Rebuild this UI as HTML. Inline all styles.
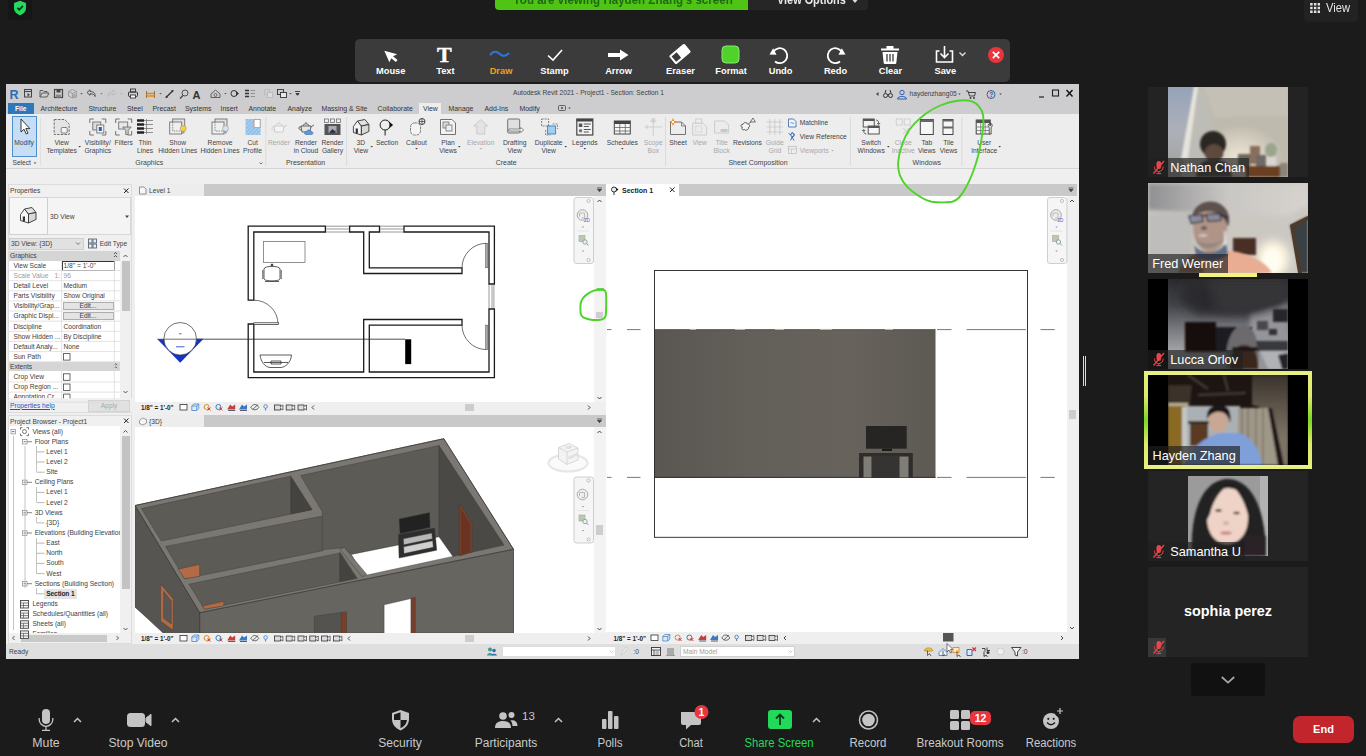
<!DOCTYPE html>
<html><head><meta charset="utf-8"><title>Zoom Meeting</title>
<style>
*{box-sizing:border-box}
html,body{margin:0;padding:0}
body{width:1366px;height:756px;background:#1b1b1b;position:relative;overflow:hidden;font-family:"Liberation Sans",sans-serif;color:#fff}
.a{position:absolute}
.t{position:absolute;white-space:nowrap;line-height:1}
.c{transform:translateX(-50%);text-align:center}
/* zoom bottom bar */
.bl{position:absolute;top:736px;font-size:12.3px;color:#c9c9c9;white-space:nowrap;transform:translateX(-50%);line-height:14px}
.tl{position:absolute;top:26.200px;font-size:9.3px;font-weight:bold;color:#fff;white-space:nowrap;transform:translateX(-50%);line-height:13px}
/* revit */
#rv{position:absolute;left:0;top:0;width:1366px;height:756px;color:#333;font-size:7px}
#rv .t{font-size:6.65px;color:#404040;line-height:8px}
#rv .tab{font-size:6.9px;color:#333}
.rt{position:absolute;top:20.5px;font-size:7px;color:#333;white-space:nowrap;line-height:8px}
.rl{position:absolute;font-size:6.7px;color:#444;white-space:nowrap;line-height:8.6px;text-align:center;transform:translateX(-50%)}
.rg{position:absolute;font-size:7px;color:#444;white-space:nowrap;line-height:8px;transform:translateX(-50%)}
.dis{color:#a8a8a8 !important}
.nm{position:absolute;left:0;bottom:0;height:19px;background:rgba(32,32,32,.66);color:#fff;font-size:12.7px;line-height:20px;padding:0 0 0 22.300px;white-space:nowrap;overflow:hidden}
</style></head>
<body>
<!-- TOP -->
<div class="a" style="left:8px;top:0;width:24px;height:20px;background:#161616;border-radius:0 0 4px 4px"></div>
<svg class="a" style="left:13px;top:0" width="14" height="16" viewBox="0 0 14 16"><path d="M7 .8 L13 3 V8 C13 11.5 10.5 14 7 15.3 C3.500 14 1 11.500 1 8 V3 Z" fill="#23d95e"/><path d="M4.300 7.800 L6.300 9.700 L9.900 5.900" fill="none" stroke="#10331c" stroke-width="1.700"/></svg>
<div class="a" style="left:495px;top:-14px;width:253px;height:24px;background:#4fc414;border-radius:0 0 0 4px"></div>
<div class="t" id="ban" style="left:512.700px;top:-6.200px;font-size:12.500px;font-weight:bold;color:#1d6a12;transform-origin:0 0;transform:scaleX(.925)">You are viewing Hayden Zhang's screen</div>
<div class="a" style="left:748px;top:-14px;width:120px;height:24px;background:#262626;border-radius:0 0 4px 0"></div>
<div class="t" id="vo" style="left:777px;top:-6.200px;font-size:12.500px;font-weight:bold;color:#e8e8e8;transform-origin:0 0;transform:scaleX(.871)">View Options</div>
<svg class="a" style="left:851px;top:0" width="8" height="6" viewBox="0 0 8 6"><path d="M1.500 0 H6.500 L4 3 Z" fill="#e0e0e0"/></svg>
<div class="a" style="left:1303.500px;top:-6px;width:54.500px;height:28px;background:#222;border-radius:4px"></div>
<svg class="a" style="left:1309.700px;top:2.900px" width="10.300" height="10" viewBox="0 0 12 12" fill="#e4e4e4"><rect x="0" y="0" width="3" height="3"/><rect x="4.500" y="0" width="3" height="3"/><rect x="9" y="0" width="3" height="3"/><rect x="0" y="4.500" width="3" height="3"/><rect x="4.500" y="4.500" width="3" height="3"/><rect x="9" y="4.500" width="3" height="3"/><rect x="0" y="9" width="3" height="3"/><rect x="4.500" y="9" width="3" height="3"/><rect x="9" y="9" width="3" height="3"/></svg>
<div class="t" style="left:1326.400px;top:1.500px;font-size:12.700px;color:#e4e4e4;transform-origin:0 0;transform:scaleX(.88)">View</div>

<!-- ANNOTATION TOOLBAR -->
<div id="tb" class="a" style="left:355px;top:39px;width:655px;height:43px;background:#3b3b3b;border-radius:5px">
<svg class="a" style="left:0;top:0" width="655" height="43" viewBox="355 39 655 43">
<!-- mouse -->
<path d="M0 0 L0 12.500 L3.400 9.600 L6 14.900 L8.400 13.700 L5.800 8.500 L10.400 8.300 Z" fill="#fff" transform="translate(384.300 50.800) rotate(-24)"/>
<!-- draw -->
<path d="M490.500 54.500 C493.500 51 496.500 51 499.500 53.800 C502.500 56.600 505.500 56.600 508.500 53.500" stroke="#2e74df" stroke-width="2" fill="none" stroke-linecap="round"/>
<!-- stamp -->
<path d="M548 55.500 L553 60 L562 50" stroke="#fff" stroke-width="1.600" fill="none"/>
<!-- arrow -->
<path d="M608 53 H620 V49.500 L628.500 55 L620 60.500 V57 H608 Z" fill="#fff"/>
<!-- eraser -->
<g transform="rotate(-40 680 54)"><rect x="670" y="48.500" width="20" height="11" rx="1.500" fill="#fff"/><rect x="672" y="50.500" width="6.500" height="7" fill="#3b3b3b"/></g>
<!-- format -->
<rect x="722" y="46" width="17" height="17" rx="4" fill="#4fd32b" stroke="#8be86e" stroke-width="1"/>
<!-- undo -->
<path d="M773.500 51.500 A7.500 7.500 0 1 1 775 61.500" stroke="#fff" stroke-width="1.800" fill="none"/><path d="M769.500 54.500 L776.500 54.800 L773.200 48.200 Z" fill="#fff"/>
<!-- redo -->
<path d="M841.500 51.500 A7.500 7.500 0 1 0 840 61.500" stroke="#fff" stroke-width="1.800" fill="none"/><path d="M845.500 54.500 L838.500 54.800 L841.800 48.200 Z" fill="#fff"/>
<!-- clear -->
<path d="M881 48.500 H899 V50.500 H881 Z M886.500 46 H893.500 V48.500 H886.500 Z" fill="#fff"/><path d="M882.500 52 H897.500 L896.300 63 Q896.200 64 895.200 64 H884.800 Q883.800 64 883.700 63 Z" fill="#fff"/><path d="M887 54 V61.500 M890 54 V61.500 M893 54 V61.500" stroke="#3b3b3b" stroke-width="1.300"/>
<!-- save -->
<path d="M939.500 51 H936.500 V62 H952.500 V51 H949.500" stroke="#fff" stroke-width="1.600" fill="none"/><path d="M944.500 46 V57 M940.500 53.500 L944.500 57.500 L948.500 53.500" stroke="#fff" stroke-width="1.600" fill="none"/>
<path d="M959.500 52.500 L962.500 55.500 L965.500 52.500" stroke="#e0e0e0" stroke-width="1.300" fill="none"/>
<!-- close -->
<circle cx="996" cy="55" r="8" fill="#e8353f"/><path d="M992.800 51.800 L999.200 58.200 M999.200 51.800 L992.800 58.200" stroke="#fff" stroke-width="1.700"/>
</svg>
<div class="t" style="left:82px;top:5px;font-family:'Liberation Serif',serif;font-weight:bold;font-size:22px;color:#fff;-webkit-text-stroke:.4px #fff">T</div>
<div class="tl" style="left:35.7px">Mouse</div>
<div class="tl" style="left:90.4px">Text</div>
<div class="tl" style="left:146.0px;color:#f0a020">Draw</div>
<div class="tl" style="left:199.5px">Stamp</div>
<div class="tl" style="left:263.6px">Arrow</div>
<div class="tl" style="left:325.5px">Eraser</div>
<div class="tl" style="left:376.1px">Format</div>
<div class="tl" style="left:425.6px">Undo</div>
<div class="tl" style="left:480.5px">Redo</div>
<div class="tl" style="left:535.4px">Clear</div>
<div class="tl" style="left:590.3px">Save</div>
</div>

<!-- REVIT WINDOW -->
<div id="rv">
<div class="a" style="left:6px;top:84px;width:1073px;height:575px;background:#efefef"></div>
<div class="a" style="left:6px;top:84px;width:1073px;height:30px;background:#cdcdcf"></div>
<div class="a" style="left:6px;top:114px;width:1073px;height:54.5px;background:#ededee;border-bottom:1px solid #d4d4d6"></div>
<div class="a" style="left:6px;top:168.5px;width:1073px;height:15.5px;background:#efeff0"></div>
<div class="a" style="left:8px;top:103px;width:26px;height:11px;background:#2a79bd"></div>
<div class="t" style="left:15px;top:105px;color:#fff !important;font-weight:bold">File</div>
<div class="a" style="left:419px;top:103px;width:22px;height:12px;background:#ededee"></div>
<div class="t tab" style="left:40.5px;top:105px;">Architecture</div>
<div class="t tab" style="left:88.5px;top:105px;">Structure</div>
<div class="t tab" style="left:127px;top:105px;">Steel</div>
<div class="t tab" style="left:152.5px;top:105px;">Precast</div>
<div class="t tab" style="left:185px;top:105px;">Systems</div>
<div class="t tab" style="left:220.5px;top:105px;">Insert</div>
<div class="t tab" style="left:248.5px;top:105px;">Annotate</div>
<div class="t tab" style="left:287.5px;top:105px;">Analyze</div>
<div class="t tab" style="left:321.5px;top:105px;">Massing &amp; Site</div>
<div class="t tab" style="left:377.5px;top:105px;">Collaborate</div>
<div class="t tab" style="left:423px;top:105px;">View</div>
<div class="t tab" style="left:448.5px;top:105px;">Manage</div>
<div class="t tab" style="left:484.5px;top:105px;">Add-Ins</div>
<div class="t tab" style="left:519.5px;top:105px;">Modify</div>
<div class="t" style="left:513px;top:89px;font-size:6.650px">Autodesk Revit 2021 - Project1 - Section: Section 1</div>
<div class="t" style="left:909.5px;top:90.2px;">haydenzhang05</div>
<svg class="a" style="left:0;top:84px" width="1090" height="32" viewBox="0 84 1090 32" fill="none">
<text x="9.500" y="98.500" font-family="Liberation Sans,sans-serif" font-weight="bold" font-size="12.500" fill="#2b6cb3">R</text>
<rect x="24.500" y="89.500" width="7" height="7.500" stroke="#444" stroke-width="1"/><path d="M24.500 91.500 H31.500" stroke="#444"/><path d="M27.500 93 L30 94.700 L27.500 96.400 Z" fill="#444"/>
<path d="M40 97 V90.500 H43 L44 91.500 H47 V93 M40 97 L42 93 H49 L47 97 Z" stroke="#555" stroke-width=".9"/>
<rect x="54.500" y="89.500" width="8" height="8" stroke="#444" stroke-width="1.200"/><rect x="56.500" y="89.500" width="4" height="3" fill="#444"/><rect x="56" y="94.500" width="5" height="3" fill="#888"/>
<path d="M68.500 91.500 L72.500 89.500 L76.500 91.500 V96 L72.500 98 L68.500 96 Z M68.500 91.500 L72.500 93.500 L76.500 91.500 M72.500 93.500 V98" stroke="#9a9a9a" stroke-width=".9"/><circle cx="75" cy="96" r="2.300" fill="#aaa"/>
<path d="M80.300 93 h2.400 l-1.200 1.500 z" fill="#555"/>
<path d="M87 92.500 L90 89.800 V91.500 C94 91.500 95.500 93.500 95 96.500 C94.500 94.500 93 93.800 90 93.800 V95.300 Z" stroke="#444" stroke-width=".9"/>
<path d="M100.300 93 h2.400 l-1.200 1.500 z" fill="#777"/>
<path d="M116 92.500 L113 89.800 V91.500 C109 91.500 107.500 93.500 108 96.500 C108.500 94.500 110 93.800 113 93.800 V95.300 Z" stroke="#b8b8b8" stroke-width=".9"/>
<path d="M120.300 93 h2.400 l-1.200 1.500 z" fill="#aaa"/>
<rect x="128.500" y="92" width="9" height="4.500" rx="1" stroke="#333" stroke-width="1"/><rect x="130.500" y="89" width="5" height="3" stroke="#333" stroke-width=".9"/><rect x="130.500" y="95" width="5" height="3" fill="#fff" stroke="#333" stroke-width=".9"/>
<path d="M146 93.500 H155 M146 96 H155" stroke="#e08a1e" stroke-width="1.300"/><path d="M146.500 91 V98 M154.500 91 V98" stroke="#a56a1e" stroke-width=".9"/>
<path d="M159.300 93 h2.400 l-1.200 1.500 z" fill="#555"/>
<path d="M166 97.500 L173 90.500" stroke="#333" stroke-width="1.300"/><path d="M165.500 98 l2.500 -.5 l-2 -2 z M173.500 90 l-2.500 .5 l2 2 z" fill="#333"/>
<circle cx="185" cy="93" r="3" stroke="#444" stroke-width=".9"/><path d="M183 95.500 L180 98.500" stroke="#444" stroke-width="1.200"/>
<text x="192.500" y="98.500" font-family="Liberation Sans,sans-serif" font-weight="bold" font-size="11" fill="#333">A</text>
<path d="M211 94 L215.500 90 L220 94 V97.500 H211 Z" stroke="#555" stroke-width=".9"/><circle cx="215.500" cy="95" r="1.500" stroke="#555" stroke-width=".8"/>
<path d="M224.300 93 h2.400 l-1.200 1.500 z" fill="#555"/>
<circle cx="234" cy="93.500" r="3" stroke="#333" stroke-width="1"/><path d="M236 91 L239 93.500 L236 96 Z" fill="#333"/>
<path d="M245 90.500 H249 M245 93.500 H249 M245 96.500 H249" stroke="#333" stroke-width="1.600"/><path d="M250.500 90.500 H255 M250.500 93.500 H255 M250.500 96.500 H255" stroke="#888" stroke-width=".9"/>
<rect x="264.500" y="89.500" width="5" height="5" stroke="#bbb" stroke-width=".9"/><rect x="267.500" y="92.500" width="5" height="5" stroke="#bbb" stroke-width=".9" fill="#ddd"/>
<rect x="277.500" y="89.500" width="6" height="5" stroke="#333" stroke-width=".9"/><rect x="280.500" y="92.500" width="6" height="5" stroke="#333" stroke-width=".9" fill="#e8e8e8"/>
<path d="M289.300 93 h2.400 l-1.200 1.500 z" fill="#555"/>
<path d="M295 91.500 H300 M296 93.500 h3 l-1.500 1.800 z" stroke="#333" stroke-width=".9" fill="#333"/>
<!-- small tab icon -->
<rect x="558.500" y="105.500" width="7" height="5" rx="1" stroke="#444" stroke-width=".8"/><circle cx="562" cy="108" r="1" fill="#444"/><path d="M568.300 107.500 h2.400 l-1.200 1.500 z" fill="#444"/>
<!-- title right --><g transform="translate(0 1)">
<path d="M878.500 91 v4 l-2.500 -2 z" fill="#444"/>
<circle cx="885.500" cy="94.500" r="2" stroke="#333" stroke-width="1"/><circle cx="890.500" cy="94.500" r="2" stroke="#333" stroke-width="1"/><path d="M885 92 l1 -3 M891 92 l-1 -3 M887.500 93.500 h1.500" stroke="#333" stroke-width="1"/>
<circle cx="902" cy="91.500" r="2.200" stroke="#2b5fb8" stroke-width="1"/><path d="M897.500 98 C898 94.500 906 94.500 906.500 98 Z" stroke="#2b5fb8" stroke-width="1"/>
<path d="M958.300 92.500 h2.400 l-1.200 1.500 z" fill="#444"/>
<path d="M966 90 h2 l1.500 5 h5 l1 -3.500 h-7" stroke="#333" stroke-width=".9"/><circle cx="970.500" cy="97" r=".9" fill="#333"/><circle cx="974" cy="97" r=".9" fill="#333"/>
<circle cx="991" cy="93.500" r="4" stroke="#2b4f9a" stroke-width=".9"/><text x="989.200" y="96" font-family="Liberation Sans,sans-serif" font-weight="bold" font-size="6.500" fill="#2b4f9a">?</text>
<path d="M999.300 92.500 h2.400 l-1.200 1.500 z" fill="#444"/>
</g><path d="M1039 97 H1044" stroke="#222" stroke-width="1.200"/>
<rect x="1052.500" y="90" width="6" height="6" stroke="#222" stroke-width="1.100"/>
<path d="M1066.500 90 L1072.500 96.500 M1072.500 90 L1066.500 96.500" stroke="#111" stroke-width="1.400"/>
</svg>
<div class="a" style="left:12px;top:116px;width:25px;height:41px;background:#c5def5;border:1px solid #4d8fcf"></div>
<div class="rl" style="left:24px;top:138.5px;">Modify</div>
<div class="rl" style="left:61.7px;top:138.5px;">View</div>
<div class="rl" style="left:61.7px;top:147.0px;">Templates</div>
<div class="rl" style="left:97.8px;top:138.5px;">Visibility/</div>
<div class="rl" style="left:97.8px;top:147.0px;">Graphics</div>
<div class="rl" style="left:123.7px;top:138.5px;">Filters</div>
<div class="rl" style="left:145px;top:138.5px;">Thin</div>
<div class="rl" style="left:145px;top:147.0px;">Lines</div>
<div class="rl" style="left:177.7px;top:138.5px;">Show</div>
<div class="rl" style="left:177.7px;top:147.0px;">Hidden Lines</div>
<div class="rl" style="left:220px;top:138.5px;">Remove</div>
<div class="rl" style="left:220px;top:147.0px;">Hidden Lines</div>
<div class="rl" style="left:252.6px;top:138.5px;">Cut</div>
<div class="rl" style="left:252.6px;top:147.0px;">Profile</div>
<div class="rl dis" style="left:279px;top:138.5px;">Render</div>
<div class="rl" style="left:306px;top:138.5px;">Render</div>
<div class="rl" style="left:306px;top:147.0px;">in Cloud</div>
<div class="rl" style="left:332.5px;top:138.5px;">Render</div>
<div class="rl" style="left:332.5px;top:147.0px;">Gallery</div>
<div class="rl" style="left:360.9px;top:138.5px;">3D</div>
<div class="rl" style="left:360.9px;top:147.0px;">View</div>
<div class="rl" style="left:387.1px;top:138.5px;">Section</div>
<div class="rl" style="left:416.5px;top:138.5px;">Callout</div>
<div class="rl" style="left:448px;top:138.5px;">Plan</div>
<div class="rl" style="left:448px;top:147.0px;">Views</div>
<div class="rl dis" style="left:480.8px;top:138.5px;">Elevation</div>
<div class="rl" style="left:514.7px;top:138.5px;">Drafting</div>
<div class="rl" style="left:514.7px;top:147.0px;">View</div>
<div class="rl" style="left:548.6px;top:138.5px;">Duplicate</div>
<div class="rl" style="left:548.6px;top:147.0px;">View</div>
<div class="rl" style="left:584.8px;top:138.5px;">Legends</div>
<div class="rl" style="left:622.3px;top:138.5px;">Schedules</div>
<div class="rl dis" style="left:653.3px;top:138.5px;">Scope</div>
<div class="rl dis" style="left:653.3px;top:147.0px;">Box</div>
<div class="rl" style="left:678px;top:138.5px;">Sheet</div>
<div class="rl dis" style="left:699.7px;top:138.5px;">View</div>
<div class="rl dis" style="left:721.6px;top:138.5px;">Title</div>
<div class="rl dis" style="left:721.6px;top:147.0px;">Block</div>
<div class="rl" style="left:747.4px;top:138.5px;">Revisions</div>
<div class="rl dis" style="left:774.8px;top:138.5px;">Guide</div>
<div class="rl dis" style="left:774.8px;top:147.0px;">Grid</div>
<div class="rl" style="left:871.2px;top:138.5px;">Switch</div>
<div class="rl" style="left:871.2px;top:147.0px;">Windows</div>
<div class="rl dis" style="left:903.2px;top:138.5px;">Close</div>
<div class="rl dis" style="left:903.2px;top:147.0px;">Inactive</div>
<div class="rl" style="left:926.8px;top:138.5px;">Tab</div>
<div class="rl" style="left:926.8px;top:147.0px;">Views</div>
<div class="rl" style="left:948.5px;top:138.5px;">Tile</div>
<div class="rl" style="left:948.5px;top:147.0px;">Views</div>
<div class="rl" style="left:984.2px;top:138.5px;">User</div>
<div class="rl" style="left:984.2px;top:147.0px;">Interface</div>
<div class="t" style="left:799.7px;top:119px;">Matchline</div>
<div class="t" style="left:799.7px;top:132.5px;word-spacing:.3px">View Reference</div>
<div class="t dis" style="left:799.7px;top:146.5px;">Viewports</div>
<div class="t" style="left:12.5px;top:159px;">Select</div>
<div class="rg" style="left:149.3px;top:158.500px">Graphics</div>
<div class="rg" style="left:305.6px;top:158.500px">Presentation</div>
<div class="rg" style="left:506.2px;top:158.500px">Create</div>
<div class="rg" style="left:758px;top:158.500px">Sheet Composition</div>
<div class="rg" style="left:926.8px;top:158.500px">Windows</div>
<svg class="a" style="left:0;top:114px" width="1090" height="56" viewBox="0 114 1090 56" fill="none"><path transform="translate(15 118)" d="M6 1 V14 L9 11.200 L11.200 16 L13 15.200 L10.800 10.600 H14.800 Z" fill="#fff" stroke="#222" stroke-width=".9"/>
<path transform="translate(52.7 118)" d="M1.500 1.500 H12 L16.500 6 V16.500 H1.500 Z" stroke="#727272" stroke-width="1" stroke-dasharray="2.500 1.200" fill="#e4e4e4"/><rect x="61.2" y="127.5" width="6" height="5.5" stroke="#727272" stroke-width=".9" fill="#f4f4f4" rx="1"/>
<path d="M78.4 146 h2.600 l-1.300 1.600 z" fill="#444"/>
<path transform="translate(88.8 118)" d="M1 5 V1 H5 M13 1 H17 V5 M17 13 V17 H13 M5 17 H1 V13" stroke="#727272" stroke-width="1" fill="none"/><rect x="92.8" y="122" width="8" height="8" stroke="#727272" stroke-width=".9" fill="#dcdcdc"/><rect x="96.8" y="125" width="7" height="8" stroke="#727272" stroke-width=".9" fill="#f2f2f2"/><rect x="98.8" y="127" width="3" height="4" fill="#2d5fb0"/>
<path transform="translate(114.7 118)" d="M1 5 V1 H5 M13 1 H17 V5 M17 13 V17 H13 M5 17 H1 V13" stroke="#727272" stroke-width="1" fill="none"/><rect x="118.7" y="122" width="9" height="7" stroke="#727272" stroke-width=".9" fill="#e8e8e8"/><path transform="translate(114.7 118)" d="M8 9 H16.500 L13.500 12.500 V16.500 H11 V12.500 Z" stroke="#727272" stroke-width=".9" fill="#cfcfcf"/>
<path transform="translate(136 118)" d="M1 2.500 H8 M1 6.500 H8 M1 10.500 H8 M1 14.500 H8" stroke="#222" stroke-width="2.400"/><path transform="translate(136 118)" d="M8 2.500 H17 M8 6.500 H17 M8 10.500 H17 M8 14.500 H17 M10.500 1 V16" stroke="#777" stroke-width=".8"/>
<rect x="172.7" y="119" width="12" height="12" stroke="#727272" stroke-width=".9" fill="#e2e2e2"/><rect x="169.7" y="122" width="12" height="12" stroke="#727272" stroke-width=".9" fill="#efefef"/><path transform="translate(168.7 118)" d="M4 4 V13 H13" stroke="#727272" stroke-width=".8" stroke-dasharray="1.500 1" fill="none"/><circle cx="183.2" cy="128.5" r="3" fill="#f3d23c" stroke="#999" stroke-width=".6"/><rect x="182.0" y="131.5" width="2.4" height="2" fill="#999"/>
<rect x="215" y="119" width="12" height="12" stroke="#727272" stroke-width=".9" fill="#e2e2e2"/><rect x="212" y="122" width="12" height="12" stroke="#727272" stroke-width=".9" fill="#efefef"/><path transform="translate(211 118)" d="M4 4 V13 H13" stroke="#727272" stroke-width=".8" stroke-dasharray="1.500 1" fill="none"/><circle cx="225.5" cy="128.5" r="3" fill="#d6e2ee" stroke="#999" stroke-width=".6"/><rect x="224.3" y="131.5" width="2.4" height="2" fill="#999"/>
<rect x="245.6" y="119" width="15" height="16" fill="#8fc1e6"/><path transform="translate(243.6 118)" d="M2 5 L6 1 M2 9 L10 1 M2 13 L14 1 M2 17 L17 2 M6 17 L17 6 M10 17 L17 10 M14 17 L17 14" stroke="#c6e0f3" stroke-width=".8"/><rect x="254.1" y="119.5" width="6" height="8" fill="#fff" stroke="#b77" stroke-width=".6"/>
<path transform="translate(270 118)" d="M4 8 H14 L13 14 H5 Z M6 8 C6 5 12 5 12 8 M9 5 V4 M14 9 L17 7 M4 9 C1 8 1 12 4.500 12" stroke="#c8c8c8" stroke-width=".9" fill="#f4f4f4"/>
<path transform="translate(297 118)" d="M4 8 H14 L13 14 H5 Z M6 8 C6 5 12 5 12 8 M9 5 V4 M14 9 L17 7 M4 9 C1 8 1 12 4.500 12" stroke="#555" stroke-width=".9" fill="#e6e6e6"/><path transform="translate(297 118)" d="M9 16.500 C7 16.500 7 13.500 9.500 13.500 C10 11.500 13.500 11.500 14 13.500 C16.500 13.500 16.500 16.500 14.500 16.500 Z" fill="#5b9bd8" stroke="#2d69b3" stroke-width=".6"/>
<rect x="324.5" y="119" width="4" height="3.5" stroke="#727272" fill="#eee" stroke-width=".8"/><rect x="330.5" y="119" width="4" height="3.5" stroke="#727272" fill="#eee" stroke-width=".8"/><rect x="336.5" y="119" width="4" height="3.5" stroke="#727272" fill="#eee" stroke-width=".8"/><rect x="324.5" y="124" width="16" height="11" fill="#555"/><rect x="328.5" y="126" width="8" height="7" fill="#aab"/><path transform="translate(323.5 118)" d="M6 14 L9 11 L11 13 L12 12 V15 H6 Z" fill="#334"/>
<g transform="translate(351.9 118)"><path d="M1.500 8.500 L5.500 3 L9.500 8 V17 L1.500 14.500 Z" stroke="#333" stroke-width=".9" fill="#f4f4f4"/><path d="M5.500 3 L13 1.500 L17 6.500 L9.500 8 Z" stroke="#333" stroke-width=".9" fill="#e2e2e2"/><path d="M9.500 8 L17 6.500 V13.500 L9.500 17 Z" stroke="#333" stroke-width=".9" fill="#d8d8d8"/><rect x="3.800" y="10.500" width="2.200" height="4.800" fill="#333"/></g>
<path d="M370.4 146 h2.600 l-1.300 1.600 z" fill="#444"/>
<circle cx="385.1" cy="125" r="5" stroke="#222" stroke-width="1" fill="#eee"/><path transform="translate(378.1 118)" d="M8 1 L15 7 L8 13 C13 10 13 4 8 1 Z" fill="#111"/><path transform="translate(378.1 118)" d="M7 12 V17.500" stroke="#222" stroke-width="1"/>
<rect x="410.5" y="123" width="10" height="12" rx="4" stroke="#727272" stroke-width=".9" fill="#f4f4f4" stroke-dasharray="3 .8"/><circle cx="422.0" cy="121.5" r="3" stroke="#333" stroke-width=".9" fill="#eee"/><path transform="translate(407.5 118)" d="M11.500 3.500 H17.500 M14.500 .5 V6.500" stroke="#333" stroke-width=".7"/>
<path d="M415.2 148 h2.600 l-1.300 1.600 z" fill="#444"/>
<path transform="translate(439 118)" d="M1.500 1.500 H13 L16.500 5 V16.500 H1.500 Z" stroke="#727272" stroke-width="1" fill="#f3f3f3"/><rect x="443" y="122" width="6" height="6" stroke="#727272" stroke-width=".8" fill="#ddd"/><rect x="446" y="125" width="6" height="6" stroke="#727272" stroke-width=".8" fill="#eee"/>
<path d="M458.0 146 h2.600 l-1.300 1.600 z" fill="#444"/>
<path transform="translate(471.8 118)" d="M9 1.500 L16 8 H13 V16 H5 V8 H2 Z" stroke="#c8c8c8" stroke-width=".9" fill="#e3e3e3"/>
<path d="M479.5 148 h2.600 l-1.300 1.600 z" fill="#b0b0b0"/>
<rect x="507.70000000000005" y="119" width="12" height="14" stroke="#727272" stroke-width="1" fill="#e0e0e0" rx="1"/><path transform="translate(505.70000000000005 118)" d="M3 11 H15 V9.500 L18 12 L15 14.500 V13 H3 Z" stroke="#727272" stroke-width=".8" fill="#f8f8f8"/>
<rect x="541.6" y="119" width="7" height="7" stroke="#727272" stroke-width=".9" fill="#eee" stroke-dasharray="2 1"/><rect x="547.6" y="126" width="8" height="8" fill="#9fd0f0" stroke="#3a83c4" stroke-width=".9"/><path transform="translate(539.6 118)" d="M6 12 V17 H11 M13 6 H18 V11" stroke="#727272" stroke-width=".8" fill="none" stroke-dasharray="2 1"/>
<path d="M564.4000000000001 146 h2.600 l-1.300 1.600 z" fill="#444"/>
<rect x="576.8" y="119" width="16" height="16" stroke="#444" stroke-width="1.200" fill="#f2f2f2"/><rect x="576.8" y="119" width="16" height="2.5" fill="#444"/><rect x="578.8" y="123.5" width="3.5" height="3.5" fill="#555"/><rect x="578.8" y="129" width="3.5" height="3.5" fill="#777" rx="1.700"/><path transform="translate(575.8 118)" d="M8 6 H15 M8 8.500 H13 M8 11.500 H15 M8 14 H13" stroke="#555" stroke-width="1"/>
<path d="M583.5 148 h2.600 l-1.300 1.600 z" fill="#444"/>
<rect x="614.3" y="121" width="16" height="13" stroke="#444" stroke-width="1" fill="#f6f6f6"/><rect x="614.3" y="121" width="16" height="3" fill="#444"/><path transform="translate(613.3 118)" d="M1 9.500 H17 M1 13 H17 M6.500 6 V16 M12 6 V16" stroke="#666" stroke-width=".8"/>
<path d="M621.0 148 h2.600 l-1.300 1.600 z" fill="#444"/>
<path transform="translate(644.3 118)" d="M9 0 V18 M0 9 H18 M6 3 H12 M3 7 V11" stroke="#c8c8c8" stroke-width=".8" fill="none"/><rect x="651.8" y="119" width="3" height="3" stroke="#c8c8c8" stroke-width=".7" fill="none"/>
<path transform="translate(669 118)" d="M1.500 4 H12.500 L16.500 8 V16.500 H1.500 Z" stroke="#727272" stroke-width="1" fill="#ececec"/><path transform="translate(669 118)" d="M12.500 4 V8 H16.500" stroke="#727272" stroke-width=".8" fill="none"/><path transform="translate(669 118)" d="M4 0 L5.200 2.800 L8 4 L5.200 5.200 L4 8 L2.800 5.200 L0 4 L2.800 2.800 Z" fill="#f08a1c"/><circle cx="673" cy="122" r="1.200" fill="#fff"/>
<path transform="translate(690.7 118)" d="M2 5 H12 L16 9 V17 H2 Z" stroke="#c8c8c8" stroke-width=".9" fill="#ececec"/><rect x="695.7" y="119" width="6" height="4" stroke="#c8c8c8" stroke-width=".8" fill="#eee"/><rect x="695.7" y="126" width="6" height="6" stroke="#c8c8c8" stroke-width=".8" fill="none" stroke-dasharray="1.500 1"/>
<path transform="translate(712.6 118)" d="M2 3 H12 L16 7 V15 H2 Z" stroke="#c8c8c8" stroke-width=".9" fill="#ececec"/><rect x="720.6" y="129" width="7" height="3" fill="#c8c8c8"/>
<path transform="translate(738.4 118)" d="M4 9 C2 9 2 6 4.500 6.500 C5 4 8.500 4 9 6 C11.500 5.500 12 9 10 9.500 C10.500 12 7 13 6 11.500 C4.500 12.500 2.500 11 4 9 Z" stroke="#444" stroke-width=".9" fill="#f4f4f4"/><path transform="translate(738.4 118)" d="M10 6 L14 2.500" stroke="#444" stroke-width=".8"/><path transform="translate(738.4 118)" d="M14.500 0 L17 4 H12 Z" stroke="#444" stroke-width=".7" fill="#eee"/>
<path transform="translate(765.8 118)" d="M1 4 H17 M1 9 H17 M1 14 H17 M4 1 V17 M9 1 V17 M14 1 V17" stroke="#c8c8c8" stroke-width=".8"/>
<rect x="863.2" y="119" width="11" height="8" stroke="#444" stroke-width=".9" fill="#f2f2f2"/><rect x="863.2" y="119" width="11" height="2" fill="#555"/><rect x="868.2" y="126" width="11" height="8" stroke="#444" stroke-width=".9" fill="#f6f6f6"/><rect x="868.2" y="126" width="11" height="2" fill="#555"/><path transform="translate(862.2 118)" d="M14 2 C16 2 16.500 4 16.500 6 M15 5 L16.500 6.500 L18 5 M4 16 C2 16 1.500 14 1.500 12 M0 13 L1.500 11.500 L3 13" stroke="#333" stroke-width=".8" fill="none"/>
<path d="M887.0 146 h2.600 l-1.300 1.600 z" fill="#444"/>
<rect x="896.2" y="119" width="6" height="6" stroke="#c8c8c8" stroke-width=".8" fill="#eee"/><rect x="904.2" y="119" width="6" height="6" stroke="#c8c8c8" stroke-width=".8" fill="#eee"/><path transform="translate(894.2 118)" d="M9 10 L15 16 M15 10 L9 16" stroke="#c8c8c8" stroke-width="1"/>
<rect x="920.3" y="119.5" width="13" height="15" stroke="#444" stroke-width="1" fill="#f6f6f6"/><rect x="920.3" y="119.5" width="13" height="2.5" fill="#666"/>
<rect x="943.0" y="119.5" width="10" height="15" stroke="#444" stroke-width="1" fill="#f6f6f6"/><rect x="943.0" y="119.5" width="10" height="2" fill="#666"/><rect x="943.0" y="126.5" width="10" height="2" fill="#666"/>
<rect x="976.2" y="120" width="14" height="14" stroke="#444" stroke-width="1" fill="#f4f4f4"/><rect x="976.2" y="120" width="14" height="3" fill="#555"/><path transform="translate(975.2 118)" d="M1 9 H15 M1 12.500 H15 M5.500 5 V16 M10 5 V16" stroke="#666" stroke-width=".7"/><path transform="translate(975.2 118)" d="M14.500 5 C12.500 6 12.500 9 14 9.500 V16 H16 V9.500 C17.500 9 17.500 6 15.500 5 V7.500 H14.500 Z" fill="#ddd" stroke="#333" stroke-width=".7"/>
<path d="M998.4000000000001 146 h2.600 l-1.300 1.600 z" fill="#444"/>
<path d="M265.8 117 V166" stroke="#dadada" stroke-width="1"/>
<path d="M346.6 117 V166" stroke="#dadada" stroke-width="1"/>
<path d="M665.5 117 V166" stroke="#dadada" stroke-width="1"/>
<path d="M850.4 117 V166" stroke="#dadada" stroke-width="1"/>
<path d="M961.9 117 V166" stroke="#dadada" stroke-width="1"/>
<path d="M40.500 117 V166" stroke="#e0e0e0" stroke-width="1"/>
<g transform="translate(787.500 118)"><path d="M1 1 H6 L8.500 3.500 V9 H1 Z" stroke="#2d63ad" stroke-width=".8" fill="#eef4fb"/><path d="M3 5 C4 3.500 5 6.500 6.500 5" stroke="#2d63ad" stroke-width=".7" fill="none"/></g>
<g transform="translate(787.500 131.500)"><path d="M1 2 L4 3.500 M4 1 C7 1 7 5 4.500 5.500 L6.500 9 M3 9 L5 5" stroke="#2d63ad" stroke-width=".9" fill="none"/><circle cx="5" cy="3.500" r="1.800" stroke="#2d63ad" stroke-width=".8" fill="none"/></g>
<g transform="translate(787.500 145.500)"><rect x="1" y="1" width="8" height="7" stroke="#c0c0c0" stroke-width=".8" fill="#eee"/><path d="M1 3.500 H9 M4 3.500 V8" stroke="#c0c0c0" stroke-width=".7"/></g>
<path d="M831.2 150 h2.600 l-1.300 1.600 z" fill="#b0b0b0"/>
<path d="M33.7 162.5 h2.600 l-1.300 1.600 z" fill="#444"/>
<path d="M259.500 162.500 l1.500 1.500 l1.500 -1.500" stroke="#555" stroke-width=".8" fill="none"/></svg>
<div class="a" style="left:8px;top:184px;width:124px;height:229px;background:#f0f0f0;border:1px solid #dcdcdc"></div>
<div class="t" style="left:10px;top:187px;">Properties</div>
<div class="a" style="left:9px;top:197px;width:122px;height:38px;background:#f4f4f4;border:1px solid #d8d8d8"></div>
<div class="a" style="left:9px;top:197px;width:39px;height:38px;background:#f6f6f6;border:1px solid #d0d0d0"></div>
<div class="t" style="left:50px;top:213px;">3D View</div>
<div class="a" style="left:9px;top:238px;width:75px;height:11.5px;background:#e1e1e1;border:1px solid #cfcfcf"></div>
<div class="t" style="left:11px;top:240px;">3D View: {3D}</div>
<div class="t" style="left:99.7px;top:240px;">Edit Type</div>
<div class="a" style="left:9px;top:251px;width:111px;height:150px;background:#fff"></div>
<div class="a" style="left:9px;top:251px;width:111px;height:9.5px;background:#d5d5d5"></div>
<div class="t" style="left:10px;top:252px;">Graphics</div>
<div class="t" style="left:13.5px;top:261.7px;">View Scale</div>
<div class="t" style="left:63.5px;top:261.7px;">1/8" = 1'-0"</div>
<div class="t" style="left:13.5px;top:271.8px;color:#9a9a9a !important">Scale Value</div>
<div class="t" style="left:63.5px;top:271.8px;color:#9a9a9a !important">96</div>
<div class="t" style="left:13.5px;top:282.0px;">Detail Level</div>
<div class="t" style="left:63.5px;top:282.0px;">Medium</div>
<div class="t" style="left:13.5px;top:292.1px;">Parts Visibility</div>
<div class="t" style="left:63.5px;top:292.1px;">Show Original</div>
<div class="t" style="left:13.5px;top:302.2px;">Visibility/Grap...</div>
<div class="a" style="left:62.5px;top:301.6px;width:51px;height:8.8px;background:#e4e4e4;border:1px solid #adadad"></div>
<div class="t" style="left:88px;top:302.2px;transform:translateX(-50%)">Edit...</div>
<div class="t" style="left:13.5px;top:312.3px;">Graphic Displ...</div>
<div class="a" style="left:62.5px;top:311.7px;width:51px;height:8.8px;background:#e4e4e4;border:1px solid #adadad"></div>
<div class="t" style="left:88px;top:312.3px;transform:translateX(-50%)">Edit...</div>
<div class="t" style="left:13.5px;top:322.5px;">Discipline</div>
<div class="t" style="left:63.5px;top:322.5px;">Coordination</div>
<div class="t" style="left:13.5px;top:332.6px;">Show Hidden ...</div>
<div class="t" style="left:63.5px;top:332.6px;">By Discipline</div>
<div class="t" style="left:13.5px;top:342.7px;">Default Analy...</div>
<div class="t" style="left:63.5px;top:342.7px;">None</div>
<div class="t" style="left:13.5px;top:352.9px;">Sun Path</div>
<div class="a" style="left:9px;top:361.7px;width:111px;height:9.6px;background:#d5d5d5"></div>
<div class="t" style="left:10px;top:362.7px;">Extents</div>
<div class="t" style="left:13.5px;top:373.1px;">Crop View</div>
<div class="t" style="left:13.5px;top:383.3px;">Crop Region ...</div>
<div class="t" style="left:13.5px;top:393.4px;">Annotation Cr...</div>
<div class="a" style="left:61.5px;top:260.5px;width:53px;height:10px;border:1px solid #333"></div>
<div class="t" style="left:54.5px;top:271.8px;color:#9a9a9a !important">1:</div>
<div class="a" style="left:9px;top:398.3px;width:123px;height:14px;background:#f0f0f0"></div>
<div class="a" style="left:120px;top:251px;width:11px;height:146px;background:#f0f0f0"></div>
<div class="a" style="left:122px;top:261px;width:7.5px;height:50px;background:#c3c3c3"></div>
<div class="t" style="left:10px;top:401.500px;color:#1a55c8 !important;text-decoration:underline">Properties help</div>
<div class="a" style="left:88px;top:400px;width:42px;height:11.5px;background:#e1e1e1;border:1px solid #d2d2d2"></div>
<div class="t" style="left:109px;top:402px;transform:translateX(-50%);color:#a8a8a8 !important">Apply</div>
<div class="a" style="left:8px;top:415px;width:124px;height:229px;background:#f0f0f0;border:1px solid #dcdcdc"></div>
<div class="t" style="left:10px;top:417.5px;">Project Browser - Project1</div>
<div class="a" style="left:9px;top:426px;width:111px;height:207px;background:#fff"></div>
<div class="t" style="left:32.4px;top:427.6px;">Views (all)</div>
<div class="t" style="left:34.7px;top:437.7px;">Floor Plans</div>
<div class="t" style="left:46.3px;top:447.9px;">Level 1</div>
<div class="t" style="left:46.3px;top:458.0px;">Level 2</div>
<div class="t" style="left:46.3px;top:468.2px;">Site</div>
<div class="t" style="left:34.7px;top:478.3px;">Ceiling Plans</div>
<div class="t" style="left:46.3px;top:488.4px;">Level 1</div>
<div class="t" style="left:46.3px;top:498.6px;">Level 2</div>
<div class="t" style="left:34.7px;top:508.7px;">3D Views</div>
<div class="t" style="left:46.3px;top:518.9px;">{3D}</div>
<div class="t" style="left:34.7px;top:529.0px;">Elevations (Building Elevation</div>
<div class="t" style="left:46.3px;top:539.1px;">East</div>
<div class="t" style="left:46.3px;top:549.3px;">North</div>
<div class="t" style="left:46.3px;top:559.4px;">South</div>
<div class="t" style="left:46.3px;top:569.6px;">West</div>
<div class="t" style="left:34.7px;top:579.7px;">Sections (Building Section)</div>
<div class="a" style="left:43.5px;top:589.0px;width:33.5px;height:9.6px;background:#e4e4e4"></div>
<div class="t" style="left:46.3px;top:589.8px;font-weight:bold;color:#222 !important;letter-spacing:-.15px">Section 1</div>
<div class="t" style="left:32.4px;top:600.0px;">Legends</div>
<div class="t" style="left:32.4px;top:610.1px;">Schedules/Quantities (all)</div>
<div class="t" style="left:32.4px;top:620.3px;">Sheets (all)</div>
<div class="t" style="left:32.4px;top:630.4px;">Families</div>
<div class="a" style="left:120px;top:426px;width:11px;height:207px;background:#f0f0f0"></div>
<div class="a" style="left:122px;top:436px;width:7.5px;height:153px;background:#c3c3c3"></div>
<div class="a" style="left:9px;top:633px;width:122px;height:10px;background:#f0f0f0"></div>
<div class="a" style="left:21px;top:634.5px;width:86px;height:7px;background:#c9c9c9"></div>
<div class="a" style="left:6px;top:644px;width:1073px;height:15px;background:#dfdfdf"></div>
<div class="t" style="left:9px;top:648px;">Ready</div>
<svg class="a" style="left:0;top:184px" width="136" height="476" viewBox="0 184 136 476" fill="none"><path d="M124 188.500 L128.500 193 M128.500 188.500 L124 193" stroke="#222" stroke-width="1"/>
<g transform="translate(19 206)"><path d="M1.500 8.500 L5.500 3 L9.500 8 V17 L1.500 14.500 Z" stroke="#333" stroke-width=".9" fill="#f4f4f4"/><path d="M5.500 3 L13 1.500 L17 6.500 L9.500 8 Z" stroke="#333" stroke-width=".9" fill="#e2e2e2"/><path d="M9.500 8 L17 6.500 V13.500 L9.500 17 Z" stroke="#333" stroke-width=".9" fill="#d8d8d8"/><rect x="3.800" y="10.500" width="2.200" height="4.800" fill="#333"/></g>
<path d="M125 215.500 h4 l-2 2.500 z" fill="#444"/>
<path d="M76 242.500 l2 2 l2 -2" stroke="#555" stroke-width=".8" fill="none"/>
<g transform="translate(88 238.500)" stroke="#456" stroke-width=".8" fill="#e8eef6"><rect x=".5" y=".5" width="3.500" height="4"/><rect x="5" y=".5" width="3.500" height="4"/><rect x=".5" y="5.500" width="3.500" height="4"/><rect x="5" y="5.500" width="3.500" height="4"/></g>
<path d="M114 254 l1.500 -1.500 l1.500 1.500 M114 257 l1.500 -1.500 l1.500 1.500" stroke="#333" stroke-width=".8" fill="none"/>
<path d="M9 270.5 H120" stroke="#dcdcdc" stroke-width=".8"/>
<path d="M9 280.7 H120" stroke="#dcdcdc" stroke-width=".8"/>
<path d="M9 290.8 H120" stroke="#dcdcdc" stroke-width=".8"/>
<path d="M9 300.9 H120" stroke="#dcdcdc" stroke-width=".8"/>
<path d="M9 311.0 H120" stroke="#dcdcdc" stroke-width=".8"/>
<path d="M9 321.2 H120" stroke="#dcdcdc" stroke-width=".8"/>
<path d="M9 331.3 H120" stroke="#dcdcdc" stroke-width=".8"/>
<path d="M9 341.4 H120" stroke="#dcdcdc" stroke-width=".8"/>
<path d="M9 351.6 H120" stroke="#dcdcdc" stroke-width=".8"/>
<path d="M9 361.7 H120" stroke="#dcdcdc" stroke-width=".8"/>
<rect x="63.500" y="353.6" width="6.500" height="6.500" fill="#fff" stroke="#444" stroke-width=".8"/>
<path d="M114 365.2 l1.500 -1.500 l1.500 1.500 M114 368.2 l1.500 -1.500 l1.500 1.500" stroke="#333" stroke-width=".8" fill="none"/>
<path d="M9 382.0 H120" stroke="#dcdcdc" stroke-width=".8"/>
<rect x="63.500" y="373.8" width="6.500" height="6.500" fill="#fff" stroke="#444" stroke-width=".8"/>
<path d="M9 392.1 H120" stroke="#dcdcdc" stroke-width=".8"/>
<rect x="63.500" y="384.0" width="6.500" height="6.500" fill="#fff" stroke="#444" stroke-width=".8"/>
<path d="M9 402.2 H120" stroke="#dcdcdc" stroke-width=".8"/>
<path d="M63.500 398.300 V394.1 H70 V398.300" fill="#fff" stroke="#444" stroke-width=".8"/>
<path d="M61.600 260.400 V401 M114.300 260.400 V401" stroke="#dcdcdc" stroke-width=".8"/>
<path d="M123.500 257 l2 -2 l2 2" stroke="#444" stroke-width=".9" fill="none"/><path d="M123.500 391 l2 2 l2 -2" stroke="#444" stroke-width=".9" fill="none"/>
<path d="M124 418.500 L128.500 423 M128.500 418.500 L124 423" stroke="#222" stroke-width="1"/>
<rect x="11" y="429.4" width="4.500" height="4.500" fill="#fff" stroke="#888" stroke-width=".7"/><path d="M12 431.6 h2.500" stroke="#333" stroke-width=".7"/>
<g transform="translate(20.500 427.6)" stroke="#555" stroke-width=".8" fill="none"><path d="M0 2 V0 H2 M6 0 H8 V2 M8 6 V8 H6 M2 8 H0 V6"/><circle cx="4" cy="4" r="2"/></g>
<rect x="22.500" y="439.5" width="4.500" height="4.500" fill="#fff" stroke="#888" stroke-width=".7"/><path d="M23.500 441.7 h2.500 M27 441.7 h5" stroke="#555" stroke-width=".7"/>
<path d="M36.500 451.9 h8" stroke="#999" stroke-width=".7"/>
<path d="M36.500 462.0 h8" stroke="#999" stroke-width=".7"/>
<path d="M36.500 472.2 h8" stroke="#999" stroke-width=".7"/>
<rect x="22.500" y="480.1" width="4.500" height="4.500" fill="#fff" stroke="#888" stroke-width=".7"/><path d="M23.500 482.3 h2.500 M27 482.3 h5" stroke="#555" stroke-width=".7"/>
<path d="M36.500 492.4 h8" stroke="#999" stroke-width=".7"/>
<path d="M36.500 502.6 h8" stroke="#999" stroke-width=".7"/>
<rect x="22.500" y="510.5" width="4.500" height="4.500" fill="#fff" stroke="#888" stroke-width=".7"/><path d="M23.500 512.7 h2.500 M27 512.7 h5" stroke="#555" stroke-width=".7"/>
<path d="M36.500 522.9 h8" stroke="#999" stroke-width=".7"/>
<rect x="22.500" y="530.8" width="4.500" height="4.500" fill="#fff" stroke="#888" stroke-width=".7"/><path d="M23.500 533.0 h2.500 M27 533.0 h5" stroke="#555" stroke-width=".7"/>
<path d="M36.500 543.1 h8" stroke="#999" stroke-width=".7"/>
<path d="M36.500 553.3 h8" stroke="#999" stroke-width=".7"/>
<path d="M36.500 563.4 h8" stroke="#999" stroke-width=".7"/>
<path d="M36.500 573.6 h8" stroke="#999" stroke-width=".7"/>
<rect x="22.500" y="581.5" width="4.500" height="4.500" fill="#fff" stroke="#888" stroke-width=".7"/><path d="M23.500 583.7 h2.500 M27 583.7 h5" stroke="#555" stroke-width=".7"/>
<path d="M36.500 593.8 h8" stroke="#999" stroke-width=".7"/>
<g transform="translate(20 600.0)"><rect x=".5" y=".5" width="8" height="7.500" fill="#f4f4f4" stroke="#444" stroke-width=".9"/><path d="M.5 3 H8.500 M.5 5.500 H8.500 M3.500 3 V8" stroke="#555" stroke-width=".7"/></g>
<g transform="translate(20 610.1)"><rect x=".5" y=".5" width="8" height="7.500" fill="#f4f4f4" stroke="#444" stroke-width=".9"/><path d="M.5 3 H8.500 M.5 5.500 H8.500 M3.500 3 V8" stroke="#555" stroke-width=".7"/></g>
<g transform="translate(20 620.3)"><rect x=".5" y=".5" width="8" height="7.500" fill="#f4f4f4" stroke="#444" stroke-width=".9"/><path d="M.5 3 H8.500 M.5 5.500 H8.500 M3.500 3 V8" stroke="#555" stroke-width=".7"/></g>
<g transform="translate(20 630.4)"><rect x=".5" y=".5" width="8" height="7.500" fill="#f4f4f4" stroke="#444" stroke-width=".9"/><path d="M.5 3 H8.500 M.5 5.500 H8.500 M3.500 3 V8" stroke="#555" stroke-width=".7"/></g>
<path d="M13.500 436 V630 M25 446 V588 M36.500 446 V471.500 M36.500 487 V502 M36.500 517 V522.500 M36.500 538 V573.500 M36.500 588 V594" stroke="#aaa" stroke-width=".7"/>
<path d="M123.500 432.500 l2 -2 l2 2" stroke="#444" stroke-width=".9" fill="none"/><path d="M123.500 628 l2 2 l2 -2" stroke="#444" stroke-width=".9" fill="none"/>
<path d="M14.500 636 l-2 2 l2 2 M116.500 636 l2 2 l-2 2" stroke="#444" stroke-width=".9" fill="none"/></svg>
<div class="a" style="left:135px;top:184px;width:470.5px;height:12px;background:#c9c9c9"></div>
<div class="a" style="left:135px;top:184px;width:69px;height:12px;background:#ededed"></div>
<div class="t" style="left:149px;top:186.7px;">Level 1</div>
<div class="a" style="left:135px;top:196px;width:470.5px;height:217px;background:#fff"></div>
<div class="a" style="left:135px;top:415px;width:470.5px;height:12px;background:#c9c9c9"></div>
<div class="a" style="left:135px;top:415px;width:69px;height:12px;background:#ededed"></div>
<div class="t" style="left:149px;top:417.7px;">{3D}</div>
<div class="a" style="left:135px;top:427px;width:470.5px;height:217px;background:#fff"></div>
<div class="a" style="left:605.6px;top:184px;width:471.4px;height:12px;background:#c9c9c9"></div>
<div class="a" style="left:605.6px;top:184px;width:73px;height:12px;background:#fff"></div>
<div class="t" style="left:622.0px;top:186.7px;font-weight:bold;color:#222 !important;font-size:7px">Section 1</div>
<div class="a" style="left:605.6px;top:196px;width:471.4px;height:448px;background:#fff"></div>
<div class="a" style="left:594px;top:196px;width:11.5px;height:206px;background:#f3f3f3"></div>
<div class="a" style="left:135px;top:402px;width:470.5px;height:11px;background:#efefef"></div>
<div class="t" style="left:141px;top:404px;color:#222 !important;font-weight:bold;font-size:6.300px">1/8" = 1'-0"</div>
<div class="a" style="left:465px;top:404px;width:9px;height:7px;background:#cdcdcd"></div>
<div class="a" style="left:595.5px;top:311.5px;width:7px;height:6px;background:#d2ccd6"></div>
<div class="a" style="left:594px;top:427px;width:11.5px;height:206px;background:#f3f3f3"></div>
<div class="a" style="left:135px;top:633px;width:470.5px;height:11px;background:#efefef"></div>
<div class="t" style="left:141px;top:635px;color:#222 !important;font-weight:bold;font-size:6.300px">1/8" = 1'-0"</div>
<div class="a" style="left:465px;top:635px;width:9px;height:7px;background:#cdcdcd"></div>
<div class="a" style="left:595.5px;top:525px;width:7px;height:10px;background:#cdcdcd"></div>
<div class="a" style="left:1067px;top:196px;width:10px;height:436px;background:#f0f0f0"></div>
<div class="a" style="left:605.6px;top:632px;width:471.4px;height:12px;background:#efefef"></div>
<div class="t" style="left:613.5px;top:634.5px;color:#222 !important;font-weight:bold;font-size:6.300px">1/8" = 1'-0"</div>
<div class="a" style="left:1068.5px;top:410px;width:7px;height:9px;background:#cdcdcd"></div>
<svg class="a" style="left:130px;top:180px" width="960" height="480" viewBox="130 180 960 480" fill="none"><defs><clipPath id="c3d"><rect x="135" y="427" width="458" height="206"/></clipPath></defs>
<path d="M248.2 226.2 H325.4 V232 H253.8 V300.2 H248.2 Z" stroke="#1a1a1a" stroke-width="1.3" fill="none" />
<path d="M349.6 226.2 H379.5 V232 H369.3 V267.8 H462 V273.5 H363.7 V232 H349.6 Z" stroke="#1a1a1a" stroke-width="1.3" fill="none" />
<path d="M404 226.2 H494.4 V284 H489 V232 H404 Z" stroke="#1a1a1a" stroke-width="1.3" fill="none" />
<path d="M248.2 324 H253.8 V372 H363.7 V319.5 H462 V325.1 H369.3 V372 H489 V309 H494.4 V377.6 H248.2 Z" stroke="#1a1a1a" stroke-width="1.3" fill="none" />
<path d="M325.4 226.2 H349.6 M325.4 232 H349.6 M325.4 229 H349.6 M379.5 226.2 H404 M379.5 232 H404 M379.5 229 H404" stroke="#555" stroke-width="0.6" fill="none" />
<path d="M489 284 V309 M492 284 V309 M493.9 284 V309" stroke="#555" stroke-width="0.6" fill="none" />
<path d="M253.8 300.2 A24 24 0 0 1 278 324" stroke="#333" stroke-width="0.7" fill="none" />
<path d="M462 267.800 A24.500 24.500 0 0 1 486.500 243.300" stroke="#333" stroke-width="0.7" fill="none" />
<path d="M462 325.100 A24.500 24.500 0 0 0 486.500 349.600" stroke="#333" stroke-width="0.7" fill="none" />
<rect x="485.500" y="243.300" width="2.500" height="24.500" fill="#aaa" stroke="#555" stroke-width=".5"/>
<rect x="485.500" y="325.100" width="2.500" height="24.500" fill="#aaa" stroke="#555" stroke-width=".5"/>
<rect x="253.800" y="322.800" width="24.500" height="1.600" fill="#fff" stroke="#222" stroke-width=".7"/>
<rect x="263.500" y="241.500" width="41.500" height="21" fill="none" stroke="#777" stroke-width=".8"/>
<g stroke="#333" stroke-width=".8" fill="none"><path d="M264 269 C264 265.500 280 265.500 280 269 V279 C280 281.500 264 281.500 264 279 Z M262.800 270 V279 M281.200 270 V279 M265 281.500 H279"/><circle cx="272" cy="265" r="1" fill="#333"/></g>
<g stroke="#333" stroke-width=".8" fill="none"><path d="M260 355 H291.500 C291 362 286 367 281 367.500 H270 C265 367 261 362 260 355 Z M264 362.500 H288 M271 361 H281 V364 H271 Z"/></g>
<rect x="405.200" y="339.300" width="6" height="24.800" fill="#000"/>
<path d="M196.800 339.200 H405.200" stroke="#222" stroke-width="0.8" fill="none" />
<path d="M157.400 339.200 H203.100 L180.200 362.700 Z" fill="#1433c8"/>
<circle cx="180.200" cy="338.800" r="16.300" fill="#fff" stroke="#333" stroke-width=".7"/>
<path d="M157.400 339.200 H203.100" stroke="#333" stroke-width=".7"/>
<path d="M179 333.800 h2.500 M176 346.800 h8.500" stroke="#1433c8" stroke-width=".8"/>
<rect x="574" y="197.5" width="19.500" height="66" rx="2.500" fill="#f5f5f5" stroke="#c9c9c9" stroke-width=".9"/>
<circle cx="588.5" cy="201.0" r="1.600" fill="none" stroke="#aaa" stroke-width=".7"/><circle cx="588.5" cy="260.0" r="1.600" fill="none" stroke="#aaa" stroke-width=".7"/>
<circle cx="582.5" cy="215.0" r="5.300" fill="#eee" stroke="#aaa" stroke-width="1"/><path d="M579.5 216.5 v-3.500 h5 v5 h-3" stroke="#bbb" stroke-width="1" fill="none"/>
<text x="584" y="221.5" font-family="Liberation Sans,sans-serif" font-size="4.500" fill="#36c">2D</text>
<path d="M581.8 226.5 h2.400 l-1.200 1.500 z" fill="#999"/>
<path d="M577 231.0 h12" stroke="#ddd" stroke-width=".7"/>
<rect x="579" y="235.5" width="6" height="6" fill="#bcc9a8" stroke="#9aa" stroke-width=".6"/><circle cx="585" cy="242.0" r="2.200" fill="#eee" stroke="#789" stroke-width=".7"/><path d="M586.5 243.5 l2 2" stroke="#789" stroke-width=".8"/>
<path d="M581.8 250.5 h2.400 l-1.200 1.500 z" fill="#999"/>
<rect x="1047.5" y="197.5" width="19.500" height="66" rx="2.500" fill="#f5f5f5" stroke="#c9c9c9" stroke-width=".9"/>
<circle cx="1062.0" cy="201.0" r="1.600" fill="none" stroke="#aaa" stroke-width=".7"/><circle cx="1062.0" cy="260.0" r="1.600" fill="none" stroke="#aaa" stroke-width=".7"/>
<circle cx="1056.0" cy="215.0" r="5.300" fill="#eee" stroke="#aaa" stroke-width="1"/><path d="M1053.0 216.5 v-3.500 h5 v5 h-3" stroke="#bbb" stroke-width="1" fill="none"/>
<text x="1057.5" y="221.5" font-family="Liberation Sans,sans-serif" font-size="4.500" fill="#36c">2D</text>
<path d="M1055.3 226.5 h2.400 l-1.200 1.500 z" fill="#999"/>
<path d="M1050.5 231.0 h12" stroke="#ddd" stroke-width=".7"/>
<rect x="1052.5" y="235.5" width="6" height="6" fill="#bcc9a8" stroke="#9aa" stroke-width=".6"/><circle cx="1058.5" cy="242.0" r="2.200" fill="#eee" stroke="#789" stroke-width=".7"/><path d="M1060.0 243.5 l2 2" stroke="#789" stroke-width=".8"/>
<path d="M1055.3 250.5 h2.400 l-1.200 1.500 z" fill="#999"/>
<rect x="574" y="477" width="19.500" height="66" rx="2.500" fill="#f5f5f5" stroke="#c9c9c9" stroke-width=".9"/>
<circle cx="588.5" cy="480.5" r="1.600" fill="none" stroke="#aaa" stroke-width=".7"/><circle cx="588.5" cy="539.5" r="1.600" fill="none" stroke="#aaa" stroke-width=".7"/>
<circle cx="582.5" cy="494.5" r="5.300" fill="#eee" stroke="#aaa" stroke-width="1"/><path d="M579.5 496 v-3.500 h5 v5 h-3" stroke="#bbb" stroke-width="1" fill="none"/>
<path d="M581.8 506 h2.400 l-1.200 1.500 z" fill="#999"/>
<path d="M577 510.5 h12" stroke="#ddd" stroke-width=".7"/>
<rect x="579" y="515" width="6" height="6" fill="#bcc9a8" stroke="#9aa" stroke-width=".6"/><circle cx="585" cy="521.5" r="2.200" fill="#eee" stroke="#789" stroke-width=".7"/><path d="M586.5 523 l2 2" stroke="#789" stroke-width=".8"/>
<path d="M581.8 530 h2.400 l-1.200 1.500 z" fill="#999"/>
<g transform="translate(548 441)"><ellipse cx="20" cy="22" rx="19.500" ry="8.500" fill="#fafafa" stroke="#e6e6e6" stroke-width="2"/><path d="M10.500 6.500 L21 2.500 L30 7 V19 L19 23.500 L10.500 18 Z" fill="#f3f3f3" stroke="#cfcfcf" stroke-width=".8"/><path d="M10.500 6.500 L19 11 L30 7 M19 11 V23.500" stroke="#cfcfcf" stroke-width=".8" fill="none"/><text x="20.500" y="18" font-family="Liberation Sans,sans-serif" font-size="3.600" fill="#b0b0b0" transform="skewY(-18) translate(0 6.500)">LEFT</text><text x="17" y="8" font-family="Liberation Sans,sans-serif" font-size="3.200" fill="#bbb">TOP</text></g>
<defs><linearGradient id="sg" x1="0" y1="0" x2="1" y2="0"><stop offset="0" stop-color="#5a5651"/><stop offset=".35" stop-color="#635f59"/><stop offset=".7" stop-color="#67635c"/><stop offset="1" stop-color="#5d5953"/></linearGradient></defs>
<rect x="654.500" y="329.600" width="281" height="147.800" fill="url(#sg)"/>
<rect x="654.500" y="270.500" width="373" height="266.800" fill="none" stroke="#222" stroke-width=".9"/>
<path d="M607 329.6 H611.500 M627 329.6 H640.500 M937 329.6 H951.500 M966.500 329.6 H1026 M1040.500 329.6 H1054.800" stroke="#555" stroke-width="0.8" fill="none" />
<path d="M607 477.4 H611.500 M627 477.4 H640.500 M937 477.4 H951.500 M966.500 477.4 H1026 M1040.500 477.4 H1054.800" stroke="#555" stroke-width="0.8" fill="none" />
<path d="M654.500 329.600 H935.500" stroke="#3a3835" stroke-width="0.7" fill="none" />
<path d="M654.500 477.400 H935.500" stroke="#2a2826" stroke-width="1" fill="none" />
<path d="M735 329.300 h10 M775 329.300 h9 M820 329.300 h12 M885 329.300 h8 M690 329.300 h6" stroke="#e8e4de" stroke-width="0.8" fill="none" />
<rect x="866" y="426" width="40.700" height="22.700" fill="#262524"/>
<rect x="882" y="448.700" width="10" height="2.300" fill="#1c1b1a"/>
<rect x="859" y="453" width="53.800" height="24.400" fill="#2e2d2c"/>
<rect x="863.500" y="456.500" width="8" height="20.900" fill="#807c76"/><rect x="899.500" y="456.500" width="9" height="20.900" fill="#807c76"/>
<rect x="872" y="455.500" width="27" height="21.900" fill="#353433"/>
<rect x="943" y="633" width="10.500" height="8.500" fill="#555"/>
<path d="M947 643.500 V652 L949 650 L950.500 653 L951.800 652.400 L950.400 649.500 H953 Z" fill="#fff" stroke="#222" stroke-width=".6"/>
<g clip-path="url(#c3d)"><polygon points="135.1,505.5 443.8,438.7 513.5,549.3 513.5,633.0 165.0,633.0 135.0,607.0" fill="#676560" stroke="#3f3d3a" stroke-width=".45" />
<polygon points="135.1,505.5 199.7,612.7 199.7,641.1 164.1,634.0 135.1,607.0" fill="#575551" stroke="#3f3d3a" stroke-width=".45" />
<polygon points="135.1,505.5 443.8,438.7 513.5,549.3 199.7,612.7" fill="#7b7873" stroke="#3f3d3a" stroke-width=".45" />
<polygon points="141.4,508.6 290.6,476.2 312.0,509.7 161.3,541.0" fill="#5d5b56" stroke="#3f3d3a" stroke-width=".45" />
<polygon points="290.6,476.2 312.0,509.7 290.6,514.0" fill="#454340" stroke="#3f3d3a" stroke-width=".45" />
<polygon points="165.5,546.4 322.8,516.0 322.8,550.7 184.6,578.8" fill="#5d5b56" stroke="#3f3d3a" stroke-width=".45" />
<polygon points="188.9,584.2 340.4,552.9 357.5,578.5 204.5,609.2" fill="#5d5b56" stroke="#3f3d3a" stroke-width=".45" />
<polygon points="339.7,552.5 355.9,577.9 339.7,581.6" fill="#454340" stroke="#3f3d3a" stroke-width=".45" />
<polygon points="300.6,475.6 439.0,445.5 439.0,536.8 351.3,554.4 344.3,547.5 322.2,549.8 322.2,511.6" fill="#5d5b56" stroke="#3f3d3a" stroke-width=".45" />
<polygon points="439.0,445.5 504.1,545.1 452.9,556.4 439.0,536.8" fill="#4b4945" stroke="#3f3d3a" stroke-width=".45" />
<polygon points="351.3,554.4 439.0,536.8 452.9,556.4 363.6,575.8" fill="#fff" stroke="#3f3d3a" stroke-width=".45" />
<polygon points="339.7,549.0 344.3,547.5 366.8,574.4 362.1,576.8" fill="#7b7873" stroke="#3f3d3a" stroke-width=".45" />
<polygon points="459.4,503.2 472.2,523.2 472.2,552.2 459.4,555.9" fill="#7a3f2b" stroke="#3f3d3a" stroke-width=".45" />
<polygon points="461.4,510.3 470.0,524.6 470.0,551.6 461.4,554.4" fill="#6a3322" stroke="#3f3d3a" stroke-width=".45" />
<polygon points="399.1,518.9 429.6,512.6 430.1,527.4 400.0,533.7" fill="#222" stroke="#3f3d3a" stroke-width=".45" />
<polygon points="398.3,534.5 434.7,528.0 436.7,550.2 399.1,558.1" fill="#2e2e2e" stroke="#3f3d3a" stroke-width=".45" />
<polygon points="403.4,538.8 431.8,533.1 432.4,538.8 403.7,544.8" fill="#b8b8b6" stroke="#3f3d3a" stroke-width=".45" />
<polygon points="403.7,546.8 432.7,540.8 433.3,547.3 404.0,553.6" fill="#d0d0ce" stroke="#3f3d3a" stroke-width=".45" />
<polygon points="178.3,569.2 199.7,564.3 199.7,576.3 184.6,578.8" fill="#b46a44" stroke="#3f3d3a" stroke-width=".45" />
<polygon points="202.5,606.1 223.8,601.3 223.8,605.8 204.5,609.2" fill="#b46a44" stroke="#3f3d3a" stroke-width=".45" />
<polygon points="160.7,584.2 173.2,599.0 173.2,630.3 160.7,621.2" fill="#b46a44" stroke="#3f3d3a" stroke-width=".45" />
<polygon points="163.6,591.3 171.2,600.7 171.2,624.0 163.6,618.3" fill="#5a5854" stroke="#3f3d3a" stroke-width=".45" />
<polygon points="384.1,604.8 411.1,598.5 411.1,641.2 384.1,641.2" fill="#fff" stroke="#3f3d3a" stroke-width=".45" />
<polygon points="411.1,598.0 415.3,597.4 415.3,641.2 411.1,641.2" fill="#7a3f2b" stroke="#3f3d3a" stroke-width=".45" />
<polygon points="314.4,616.2 342.8,612.2 342.8,641.2 314.4,641.2" fill="#55534f" stroke="#3f3d3a" stroke-width=".45" />
<polygon points="341.4,612.8 346.5,611.9 346.5,641.2 341.4,641.2" fill="#7a3f2b" stroke="#3f3d3a" stroke-width=".45" />
<g stroke="#3d3b38" stroke-width=".6" fill="none"><path d="M135.1 505.5 L443.8 438.7 L513.5 549.3 V633"/><path d="M135.1 505.5 L199.7 612.7 L513.5 549.3"/><path d="M199.7 612.7 V633"/></g></g>
<path d="M139.500 187 H144 L146 189 V194 H139.500 Z" stroke="#777" stroke-width=".8" fill="#f8f8f8"/>
<g transform="translate(138.500 417)"><path d="M1 3.500 L4 1 L8 2.500 V6 L4.500 8 L1 6.500 Z" stroke="#888" stroke-width=".8" fill="#f4f4f4"/></g>
<g transform="translate(610.500 186)"><circle cx="3.500" cy="3.500" r="2.500" stroke="#222" stroke-width=".9" fill="#eee"/><path d="M4 .5 L8 3.500 L4 6.500 C6.500 5 6.500 2 4 .5 Z" fill="#111"/><path d="M3.500 6 V9" stroke="#222" stroke-width=".9"/></g>
<path d="M670 187.500 L674.500 192 M674.500 187.500 L670 192" stroke="#222" stroke-width="1"/>
<path d="M597.0 188 h5 M597.5 189.5 h4 l-2 2.200 z" stroke="#444" stroke-width=".8" fill="#444"/>
<path d="M597.0 419 h5 M597.5 420.5 h4 l-2 2.200 z" stroke="#444" stroke-width=".8" fill="#444"/>
<path d="M1068.5 188 h5 M1069 189.5 h4 l-2 2.200 z" stroke="#444" stroke-width=".8" fill="#444"/>
<path d="M597.5 202 l2 -2 l2 2 M597.5 397 l2 2 l2 -2" stroke="#333" stroke-width=".9" fill="none"/>
<path d="M597.5 433 l2 -2 l2 2 M597.5 628 l2 2 l2 -2" stroke="#333" stroke-width=".9" fill="none"/>
<path d="M1070 202 l2 -2 l2 2 M1070 627 l2 2 l2 -2" stroke="#333" stroke-width=".9" fill="none"/>
<path d="M314 405.5 l-2 2 l2 2 M588 405.5 l2 2 l-2 2" stroke="#333" stroke-width=".9" fill="none"/>
<path d="M350 636.5 l-2 2 l2 2 M588 636.5 l2 2 l-2 2" stroke="#333" stroke-width=".9" fill="none"/>
<path d="M786 636 l-2 2 l2 2 M1061 636 l2 2 l-2 2" stroke="#333" stroke-width=".9" fill="none"/>
<rect x="180.0" y="404.5" width="7" height="5.500" stroke="#333" stroke-width=".8" fill="#fff"/>
<path d="M191.8 406.0 l2 -2 h5 v4.500 l-2 2 h-5 z M191.8 406.0 h5 l2 -2 M196.8 406.0 v4.500" stroke="#3a78c0" stroke-width=".7" fill="#dce9f6"/>
<circle cx="206.6" cy="407.0" r="2.500" stroke="#e08a1e" stroke-width="1" fill="none"/><path d="M207.6 407.5 l3 3 M210.6 407.5 l-3 3" stroke="#d03030" stroke-width=".9"/>
<circle cx="218.4" cy="407.0" r="2.500" stroke="#3a78c0" stroke-width="1" fill="none"/><path d="M219.4 407.5 l3 3 M222.4 407.5 l-3 3" stroke="#d03030" stroke-width=".9"/>
<path d="M227.2 409.5 l3 -5 l2 2 l3 -2 v5 z" fill="#c04040"/><path d="M228.2 410.5 h7" stroke="#335" stroke-width=".8"/>
<path d="M239.0 409.5 l3 -5 l2 2 l3 -2 v5 z" fill="#3a78c0"/><path d="M240.0 410.5 h7" stroke="#335" stroke-width=".8"/>
<path d="M250.8 407.5 c2 -4 6 -4 8 0 c-2 3 -6 3 -8 0 z M252.8 409.5 l5 -5" stroke="#444" stroke-width=".8" fill="none"/>
<circle cx="265.6" cy="406.5" r="1.800" stroke="#3a78c0" stroke-width=".8" fill="#eef"/><path d="M265.6 408.5 v2" stroke="#555" stroke-width=".8"/>
<rect x="274.4" y="405.0" width="6" height="5" stroke="#333" stroke-width=".8" fill="#ddd"/><path d="M280.4 406.5 l2.500 -1.500 v5 l-2.500 -1.500" stroke="#333" stroke-width=".7" fill="#eee"/>
<rect x="286.2" y="405.0" width="6" height="5" stroke="#333" stroke-width=".8" fill="#ddd"/><path d="M292.2 406.5 l2.500 -1.500 v5 l-2.500 -1.500" stroke="#333" stroke-width=".7" fill="#eee"/>
<rect x="298.0" y="405.0" width="6" height="5" stroke="#333" stroke-width=".8" fill="#ddd"/><path d="M304.0 406.5 l2.500 -1.500 v5 l-2.500 -1.500" stroke="#333" stroke-width=".7" fill="#eee"/>
<rect x="180.0" y="635.5" width="7" height="5.500" stroke="#333" stroke-width=".8" fill="#fff"/>
<path d="M191.8 637.0 l2 -2 h5 v4.500 l-2 2 h-5 z M191.8 637.0 h5 l2 -2 M196.8 637.0 v4.500" stroke="#3a78c0" stroke-width=".7" fill="#dce9f6"/>
<circle cx="206.6" cy="638.0" r="2.500" stroke="#e08a1e" stroke-width="1" fill="none"/><path d="M207.6 638.5 l3 3 M210.6 638.5 l-3 3" stroke="#d03030" stroke-width=".9"/>
<circle cx="218.4" cy="638.0" r="2.500" stroke="#3a78c0" stroke-width="1" fill="none"/><path d="M219.4 638.5 l3 3 M222.4 638.5 l-3 3" stroke="#d03030" stroke-width=".9"/>
<path d="M227.2 640.5 l3 -5 l2 2 l3 -2 v5 z" fill="#c04040"/><path d="M228.2 641.5 h7" stroke="#335" stroke-width=".8"/>
<path d="M239.0 640.5 l3 -5 l2 2 l3 -2 v5 z" fill="#3a78c0"/><path d="M240.0 641.5 h7" stroke="#335" stroke-width=".8"/>
<path d="M250.8 638.5 c2 -4 6 -4 8 0 c-2 3 -6 3 -8 0 z M252.8 640.5 l5 -5" stroke="#444" stroke-width=".8" fill="none"/>
<circle cx="265.6" cy="637.5" r="1.800" stroke="#3a78c0" stroke-width=".8" fill="#eef"/><path d="M265.6 639.5 v2" stroke="#555" stroke-width=".8"/>
<rect x="274.4" y="636.0" width="6" height="5" stroke="#333" stroke-width=".8" fill="#ddd"/><path d="M280.4 637.5 l2.500 -1.500 v5 l-2.500 -1.500" stroke="#333" stroke-width=".7" fill="#eee"/>
<rect x="286.2" y="636.0" width="6" height="5" stroke="#333" stroke-width=".8" fill="#ddd"/><path d="M292.2 637.5 l2.500 -1.500 v5 l-2.500 -1.500" stroke="#333" stroke-width=".7" fill="#eee"/>
<rect x="298.0" y="636.0" width="6" height="5" stroke="#333" stroke-width=".8" fill="#ddd"/><path d="M304.0 637.5 l2.500 -1.500 v5 l-2.500 -1.500" stroke="#333" stroke-width=".7" fill="#eee"/>
<rect x="309.8" y="636.0" width="6" height="5" stroke="#333" stroke-width=".8" fill="#ddd"/><path d="M315.8 637.5 l2.500 -1.500 v5 l-2.500 -1.500" stroke="#333" stroke-width=".7" fill="#eee"/>
<rect x="321.6" y="636.0" width="6" height="5" stroke="#333" stroke-width=".8" fill="#ddd"/><path d="M327.6 637.5 l2.500 -1.500 v5 l-2.500 -1.500" stroke="#333" stroke-width=".7" fill="#eee"/>
<rect x="333.4" y="636.0" width="6" height="5" stroke="#333" stroke-width=".8" fill="#ddd"/><path d="M339.4 637.5 l2.500 -1.500 v5 l-2.500 -1.500" stroke="#333" stroke-width=".7" fill="#eee"/>
<rect x="651.0" y="635" width="7" height="5.500" stroke="#333" stroke-width=".8" fill="#fff"/>
<path d="M662.8 636.5 l2 -2 h5 v4.500 l-2 2 h-5 z M662.8 636.5 h5 l2 -2 M667.8 636.5 v4.500" stroke="#3a78c0" stroke-width=".7" fill="#dce9f6"/>
<circle cx="677.6" cy="637.5" r="2.500" stroke="#e08a1e" stroke-width="1" fill="none"/><path d="M678.6 638 l3 3 M681.6 638 l-3 3" stroke="#d03030" stroke-width=".9"/>
<circle cx="689.4" cy="637.5" r="2.500" stroke="#3a78c0" stroke-width="1" fill="none"/><path d="M690.4 638 l3 3 M693.4 638 l-3 3" stroke="#d03030" stroke-width=".9"/>
<path d="M698.2 640 l3 -5 l2 2 l3 -2 v5 z" fill="#c04040"/><path d="M699.2 641 h7" stroke="#335" stroke-width=".8"/>
<path d="M710.0 640 l3 -5 l2 2 l3 -2 v5 z" fill="#3a78c0"/><path d="M711.0 641 h7" stroke="#335" stroke-width=".8"/>
<path d="M721.8 638 c2 -4 6 -4 8 0 c-2 3 -6 3 -8 0 z M723.8 640 l5 -5" stroke="#444" stroke-width=".8" fill="none"/>
<circle cx="736.6" cy="637" r="1.800" stroke="#3a78c0" stroke-width=".8" fill="#eef"/><path d="M736.6 639 v2" stroke="#555" stroke-width=".8"/>
<rect x="745.4" y="635.5" width="6" height="5" stroke="#333" stroke-width=".8" fill="#ddd"/><path d="M751.4 637 l2.500 -1.500 v5 l-2.500 -1.500" stroke="#333" stroke-width=".7" fill="#eee"/>
<rect x="757.2" y="635.5" width="6" height="5" stroke="#333" stroke-width=".8" fill="#ddd"/><path d="M763.2 637 l2.500 -1.500 v5 l-2.500 -1.500" stroke="#333" stroke-width=".7" fill="#eee"/>
<rect x="769.0" y="635.5" width="6" height="5" stroke="#333" stroke-width=".8" fill="#ddd"/><path d="M775.0 637 l2.500 -1.500 v5 l-2.500 -1.500" stroke="#333" stroke-width=".7" fill="#eee"/></svg>
<div class="a" style="left:501.5px;top:646px;width:114.5px;height:11px;background:#fff;border:1px solid #dedede"></div>
<div class="a" style="left:679.5px;top:646px;width:115.5px;height:11px;background:#fff;border:1px solid #cfcfcf"></div>
<div class="t" style="left:683px;top:648px;color:#a0a0a0 !important">Main Model</div>
<div class="t" style="left:633.5px;top:648px;">:0</div>
<div class="t" style="left:1022px;top:648px;">:0</div>
<svg class="a" style="left:480px;top:644px" width="600" height="16" viewBox="480 644 600 16" fill="none">
<g transform="translate(487 646.500)"><circle cx="3" cy="3" r="2" fill="#3a9a8a"/><path d="M0 9 C0 5.500 6 5.500 6 9 Z" fill="#3a9a8a"/><circle cx="7" cy="4" r="1.800" fill="#2d6cb8"/><path d="M4.500 9 C5 6.500 9.500 6.500 10 9 Z" fill="#2d6cb8"/></g>
<path d="M609.500 650.500 l2 2 l2 -2" stroke="#bbb" stroke-width=".8"/>
<path d="M621 655 l1 -3 l4 -5 l1.500 1.500 l-4 5 z" stroke="#c8c8c8" stroke-width=".8" fill="#eee"/>
<g transform="translate(651 647)"><rect x=".5" y=".5" width="9" height="8" stroke="#333" stroke-width=".9" fill="#f4f4f4"/><path d="M.5 3 H9.500 M3 3 V8.500" stroke="#333" stroke-width=".8"/><path d="M4.500 5 H8 M4.500 7 H8" stroke="#555" stroke-width=".7"/></g>
<g transform="translate(666 647)"><rect x="1" y="1" width="7" height="7" fill="#aaa"/><path d="M0 8.500 H9" stroke="#888" stroke-width=".8"/></g>
<path d="M788.500 650.500 l2 2 l2 -2" stroke="#bbb" stroke-width=".8"/>
<g transform="translate(923 646.500)"><path d="M1 4 C3 .5 8 .5 10 4 C8 5 3 5 1 4 Z" fill="#f0c040" stroke="#a07a20" stroke-width=".6"/><path d="M4.500 4 V9 L6.500 7 L8 9.500" stroke="#444" stroke-width=".8"/></g>
<g transform="translate(938 646.500)"><path d="M1 6 L5 2 L9 6 V9 H1 Z" stroke="#3a78c0" stroke-width=".8" fill="#e8f0fa"/><path d="M5 4 V9.500 L7 8" stroke="#444" stroke-width=".8"/></g>
<g transform="translate(952 646.500)"><rect x="1" y="1" width="6" height="5" stroke="#e08a1e" stroke-width=".9" fill="#fde9c8"/><path d="M5 4 V10 L7 8.500 L8.500 10.500" stroke="#444" stroke-width=".8"/></g>
<g transform="translate(966 646.500)"><path d="M1 3 H6 V9 H1 Z" stroke="#2d6cb8" stroke-width="1" fill="#dce9f8"/><path d="M6.500 1 L10 4.500 M10 1 L6.500 4.500" stroke="#d03030" stroke-width="1.100"/></g>
<g transform="translate(981 646.500)"><path d="M1 2 h3 v3 M9 4 h-3 v-3 M3 5 V10 L5 8.500 L6.500 10.500" stroke="#333" stroke-width=".9"/><circle cx="7" cy="6" r="1.500" fill="#333"/></g>
<g transform="translate(996 647)"><circle cx="4.500" cy="4.500" r="3.500" stroke="#ccc" stroke-width=".9" fill="#eee"/></g>
<path d="M1011.500 647.500 H1021 L1017.500 652 V656 L1015 655 V652 Z" stroke="#333" stroke-width=".9" fill="#f4f4f4"/>
</svg>
</div>
<!-- GALLERY -->
<div id="gal">
<svg width="0" height="0" class="a"><defs>
<filter id="b1" x="-20%" y="-20%" width="140%" height="140%"><feGaussianBlur stdDeviation="1"/></filter>
<filter id="b2" x="-20%" y="-20%" width="140%" height="140%"><feGaussianBlur stdDeviation="2.200"/></filter>
<filter id="b4" x="-30%" y="-30%" width="160%" height="160%"><feGaussianBlur stdDeviation="5"/></filter>
</defs></svg>
<!-- Nathan -->
<div class="a" style="left:1148px;top:87px;width:160px;height:90px;background:#232323;overflow:hidden">
<svg class="a" style="left:20px;top:0" width="120" height="90" viewBox="0 0 120 90">
<defs><linearGradient id="ng" x1="0" y1="0" x2="0" y2="1"><stop offset="0" stop-color="#97a3ba"/><stop offset=".5" stop-color="#adb0b8"/><stop offset="1" stop-color="#a09e98"/></linearGradient>
<radialGradient id="nl" cx=".6" cy=".78" r=".36"><stop offset="0" stop-color="#eee7d6"/><stop offset="1" stop-color="#bfbaae"/></radialGradient></defs>
<rect width="120" height="90" fill="url(#nl)"/>
<path d="M36 0 H120 V29 L46 30 Z" fill="#c4c0b6" filter="url(#b1)"/>
<path d="M0 0 H27 L14 90 H0 Z" fill="url(#ng)"/>
<path d="M27 0 H36 L46 40 V90 H14 Z" fill="#bdbcb6" filter="url(#b1)"/>
<path d="M26 0 H30 L20 72 H13 Z" fill="#e4e4dc" filter="url(#b1)"/>
<g filter="url(#b1)"><ellipse cx="45" cy="57" rx="13" ry="13" fill="#2b2622"/><ellipse cx="46" cy="66" rx="9.500" ry="9" fill="#5f4a3e"/><path d="M28 90 C30 74 38 72 46 74 C56 72 62 76 64 90 Z" fill="#4a4744"/></g>
<g filter="url(#b1)"><rect x="70" y="67" width="12" height="14" fill="#6b675f"/><rect x="82" y="59" width="10" height="18" fill="#8a6e5c"/><rect x="88" y="68" width="10" height="12" fill="#6f6a66"/><rect x="99" y="70" width="9" height="9" fill="#d8d6d0"/><ellipse cx="103" cy="63" rx="6" ry="7" fill="#9aa58c"/><path d="M78 79 H112 V90 H78 Z" fill="#6a3f22"/><rect x="112" y="76" width="8" height="14" fill="#8c8478"/></g>
</svg>
<div class="nm" style="width:101px"><span>Nathan Chan</span><svg class="a" style="left:4px;bottom:2px" width="14" height="15" viewBox="0 0 14 15"><rect x="4.500" y="1" width="4.600" height="8" rx="2.300" fill="#e8454d"/><path d="M2.500 6.500 V7.300 A4.300 4.300 0 0 0 11.100 7.300 V6.500 M6.800 11.600 V13.500 M4.300 13.600 H9.300" stroke="#e8454d" stroke-width="1" fill="none"/><path d="M1.500 13.500 L12 1" stroke="#e8454d" stroke-width="1.300"/></svg></div>
</div>
<!-- Fred -->
<div class="a" style="left:1148px;top:183px;width:160px;height:90px;background:#c9c6c0;overflow:hidden">
<svg class="a" style="left:0;top:0" width="160" height="90" viewBox="0 0 160 90">
<defs><linearGradient id="fg" x1="0" y1="0" x2="1" y2="0"><stop offset="0" stop-color="#8f8f93"/><stop offset=".5" stop-color="#c9c7c3"/><stop offset="1" stop-color="#d6d3ce"/></linearGradient></defs>
<rect width="160" height="90" fill="#cbc8c2"/>
<path d="M0 0 H160 V22 L140 33 L40 30 L0 27 Z" fill="url(#fg)" filter="url(#b2)"/>
<rect x="0" y="30" width="45" height="60" fill="#bebdbb" filter="url(#b2)"/>
<ellipse cx="125" cy="76" rx="16" ry="18" fill="#fff8e2" filter="url(#b4)"/>
<ellipse cx="124" cy="78" rx="9" ry="12" fill="#fffdf2" filter="url(#b2)"/>
<rect x="85" y="55" width="23" height="17" fill="#4a2f27" filter="url(#b1)"/>
<path d="M142 42 L160 33 V90 H152 Z" fill="#3a3f42" filter="url(#b1)"/><path d="M142 42 L160 33 V37 L146 45 L154 90 H150 Z" fill="#4e3a2a"/>
<g filter="url(#b1)"><path d="M30 90 C36 74 50 68 62 68 L84 68 C102 71 118 79 124 90 Z" fill="#e8ad92"/><path d="M30 90 C34 78 42 72 52 70 L56 90 Z" fill="#9a7660"/>
<ellipse cx="62" cy="44" rx="17" ry="25" fill="#b09488"/><path d="M44 34 C46 18 66 14 76 24 C82 30 82 38 80 44 C76 30 60 22 44 34 Z" fill="#5b514d"/>
<path d="M46 62 C54 72 70 72 78 60 L80 72 C70 80 54 80 48 72 Z" fill="#5d6e86"/>
<path d="M47 55 C52 68 68 68 76 54 C72 62 54 64 47 55 Z" fill="#8d8580"/>
<path d="M41 33 L54 31.500 L55 38.500 L43.500 40.500 Z M58 31.500 L72 30.500 L73 37.500 L60 38.500 Z" fill="#7b86a0" fill-opacity=".75" stroke="#2a2d38" stroke-width="1.200"/><path d="M54 33 L58 32.500 M72 31.500 L80 35" stroke="#23262f" stroke-width="1.400"/>
<ellipse cx="55" cy="52.500" rx="4.500" ry="1.300" fill="#d9c4c0"/><ellipse cx="56" cy="45" rx="3" ry="2" fill="#6e5a56"/><path d="M77 48 V62" stroke="#f2f2f2" stroke-width="1.300"/></g>
</svg>
<div class="nm" style="width:79.500px;padding-left:4.200px"><span>Fred Werner</span></div>
</div>
<div class="a" style="left:1199px;top:273px;width:58px;height:4px;background:#f2f27e"></div>
<!-- Lucca -->
<div class="a" style="left:1148px;top:279px;width:160px;height:90px;background:#000;overflow:hidden">
<svg class="a" style="left:20px;top:0" width="120" height="90" viewBox="0 0 120 90">
<defs><linearGradient id="lg" x1="0" y1="0" x2="0" y2="1"><stop offset="0" stop-color="#2a2a2e"/><stop offset=".3" stop-color="#45464b"/><stop offset=".55" stop-color="#77787d"/><stop offset=".8" stop-color="#a2a3a7"/><stop offset="1" stop-color="#8a8b8f"/></linearGradient></defs>
<rect width="120" height="90" fill="url(#lg)"/>
<path d="M20 0 H120 V20 L80 34 L30 36 L10 20 Z" fill="#2b2b2e" filter="url(#b4)"/>
<path d="M82 34 L120 22 V90 H82 Z" fill="#94959a" filter="url(#b2)"/><path d="M40 0 H120 V26 L84 36 L50 34 Z" fill="#343438" filter="url(#b4)"/>
<g filter="url(#b1)"><rect x="17" y="43" width="31" height="30" fill="#17100e"/><rect x="48" y="48" width="36" height="25" fill="#1f1c22"/><rect x="105" y="30" width="15" height="13" fill="#27272a"/><rect x="89" y="42" width="11" height="9" fill="#4a4648"/><rect x="101" y="50" width="8" height="6" fill="#333"/>
<path d="M58 90 C56 60 66 46 76 46 C88 48 92 66 90 90 Z" fill="#6c6b6c"/><path d="M62 90 C62 74 66 66 76 66 C86 66 90 74 90 90 Z" fill="#3a261c"/><rect x="64" y="68" width="26" height="4" fill="#1c1818"/>
<path d="M92 72 H120 V90 H100 Z" fill="#b0b2b6"/><path d="M88 62 H120 V72 H90 Z" fill="#38383c"/><path d="M110 76 L120 74 V90 H114 Z" fill="#23242c"/></g>
</svg>
<div class="nm" style="width:94.500px"><span>Lucca Orlov</span><svg class="a" style="left:4px;bottom:2px" width="14" height="15" viewBox="0 0 14 15"><rect x="4.500" y="1" width="4.600" height="8" rx="2.300" fill="#e8454d"/><path d="M2.500 6.500 V7.300 A4.300 4.300 0 0 0 11.100 7.300 V6.500 M6.800 11.600 V13.500 M4.300 13.600 H9.300" stroke="#e8454d" stroke-width="1" fill="none"/><path d="M1.500 13.500 L12 1" stroke="#e8454d" stroke-width="1.300"/></svg></div>
</div>
<!-- Hayden -->
<div class="a" style="left:1144px;top:371px;width:168px;height:98px;background:linear-gradient(180deg,#e6ef7c 0%,#dfeb6a 25%,#7fd824 50%,#dfeb6a 75%,#e6ef7c 100%)"></div>
<div class="a" style="left:1146px;top:373px;width:164px;height:94px;border-top:2px solid #e9f088;border-bottom:2px solid #e9f088"></div>
<div class="a" style="left:1148px;top:375px;width:160px;height:90px;background:#000;overflow:hidden">
<svg class="a" style="left:20px;top:0" width="120" height="90" viewBox="0 0 120 90">
<rect width="120" height="90" fill="#1c1512"/>
<g filter="url(#b1)"><defs><linearGradient id="hw" x1="0" y1="0" x2="0" y2="1"><stop offset="0" stop-color="#3a332d"/><stop offset=".35" stop-color="#5e554b"/><stop offset=".7" stop-color="#7d7365"/></linearGradient></defs><path d="M84 0 H120 V90 H100 L92 32 L84 30 Z" fill="url(#hw)"/><path d="M0 10 H24 L22 30 H0 Z" fill="#3a3129"/>
<rect x="0" y="30" width="18" height="60" fill="#8a6a22"/><rect x="0" y="28" width="20" height="3" fill="#b7ab90"/><rect x="18" y="31" width="54" height="59" fill="#aab0b4"/><rect x="20" y="46" width="22" height="3" fill="#302a28"/><rect x="22" y="49" width="18" height="22" fill="#5a3a22"/><rect x="14" y="32" width="5" height="58" fill="#c4c6c4"/>
<path d="M70 33 H102 L110 90 H70 Z" fill="#9f9888"/><path d="M100 33 L104 33 L116 90 H110 Z" fill="#1e1814"/><path d="M74 33 V90 M80 33 V90 M88 33 V90 M95 33 V90" stroke="#7f786a" stroke-width="1.500"/>
<path d="M20 0 L40 14 M56 0 L60 16 M30 20 L78 18" stroke="#3b3531" stroke-width="3"/>
<path d="M16 90 C24 70 38 62 52 58 L72 58 C86 64 92 76 94 90 Z" fill="#7f9fd8"/>
<ellipse cx="50.500" cy="45.500" rx="10" ry="12" fill="#c9a795"/><path d="M39 44 C38 32 46 30 52 30 C60 30 64 36 62 48 C60 38 54 36 48 37 C44 38 41 40 39 44 Z" fill="#1a1413"/></g>
</svg>
<div class="nm" style="width:91.500px;padding-left:4.500px"><span>Hayden Zhang</span></div>
</div>
<!-- Samantha -->
<div class="a" style="left:1148px;top:471px;width:160px;height:90px;background:#242424;overflow:hidden">
<svg class="a" style="left:40px;top:5px" width="80" height="80" viewBox="0 0 80 80">
<rect width="80" height="80" fill="#9b9b9b"/><rect x="72" y="0" width="8" height="80" fill="#b2b2b2"/>
<g filter="url(#b1)"><path d="M4 80 C2 40 12 6 38 3 C62 2 78 30 78 80 Z" fill="#232022"/>
<path d="M19 42 C19 22 28 12 40 12 C52 12 60 22 60 42 C60 58 51 68 39 68 C28 68 19 58 19 42 Z" fill="#eed3c6"/>
<path d="M17 48 C17 26 27 11 42 8 C33 13 25 24 22 38 Z M42 8 C55 10 63 26 62 48 C59 30 52 15 42 8 Z" fill="#232022"/>
<ellipse cx="30.500" cy="34.500" rx="3.200" ry="1.200" fill="#3a2a28"/><ellipse cx="48.500" cy="37" rx="3.200" ry="1.200" fill="#3a2a28"/><ellipse cx="38" cy="57" rx="6" ry="1.800" fill="#cf8a86"/><ellipse cx="38" cy="47" rx="3" ry="2" fill="#d9b0a2"/>
<path d="M56 60 H78 V80 H56 Z" fill="#2a2428"/></g>
</svg>
<div class="nm" style="width:96.500px"><span>Samantha U</span><svg class="a" style="left:4px;bottom:2px" width="14" height="15" viewBox="0 0 14 15"><rect x="4.500" y="1" width="4.600" height="8" rx="2.300" fill="#e8454d"/><path d="M2.500 6.500 V7.300 A4.300 4.300 0 0 0 11.100 7.300 V6.500 M6.800 11.600 V13.500 M4.300 13.600 H9.300" stroke="#e8454d" stroke-width="1" fill="none"/><path d="M1.500 13.500 L12 1" stroke="#e8454d" stroke-width="1.300"/></svg></div>
</div>
<!-- sophia -->
<div class="a" style="left:1148px;top:567px;width:160px;height:90px;background:#242424;overflow:hidden">
<div class="t c" style="left:80px;top:37.300px;font-size:14.400px;font-weight:bold;color:#fff">sophia perez</div>
<div class="nm" style="width:18px;padding:0;background:#383838"><svg class="a" style="left:4px;bottom:2px" width="14" height="15" viewBox="0 0 14 15"><rect x="4.500" y="1" width="4.600" height="8" rx="2.300" fill="#e8454d"/><path d="M2.500 6.500 V7.300 A4.300 4.300 0 0 0 11.100 7.300 V6.500 M6.800 11.600 V13.500 M4.300 13.600 H9.300" stroke="#e8454d" stroke-width="1" fill="none"/><path d="M1.500 13.500 L12 1" stroke="#e8454d" stroke-width="1.300"/></svg></div>
</div>
<div class="a" style="left:1191px;top:663px;width:74px;height:33px;background:#111;border-radius:3px"></div>
<svg class="a" style="left:1218px;top:673.500px" width="20" height="12" viewBox="0 0 20 12"><path d="M3.800 3 L10 8.600 L16.200 3" stroke="#a4a4ae" stroke-width="1.800" fill="none"/></svg>
<!-- splitter handle -->
<div class="a" style="left:1083px;top:356px;width:1px;height:30px;background:#ddd"></div>
<div class="a" style="left:1085px;top:356px;width:1px;height:30px;background:#ddd"></div>
</div>

<!-- BOTTOM BAR -->
<div id="bb">
<svg class="a" style="left:0;top:700px" width="1366" height="56" viewBox="0 700 1366 56">
<!-- mic -->
<rect x="42" y="709" width="8" height="15" rx="4" fill="#c4c4c4"/><path d="M39.200 718 V719.500 A6.800 6.800 0 0 0 52.800 719.500 V718" stroke="#c4c4c4" stroke-width="1.300" fill="none"/><path d="M46 726 V730 M42 730.300 H50" stroke="#c4c4c4" stroke-width="1.300"/>
<path d="M74 722 L77.500 718.500 L81 722" stroke="#c4c4c4" stroke-width="1.500" fill="none"/>
<!-- cam -->
<rect x="127" y="713" width="18" height="14" rx="3.500" fill="#c4c4c4"/><path d="M146 718 L151 714.200 V725.800 L146 722 Z" fill="#c4c4c4" stroke="#c4c4c4" stroke-width="1" stroke-linejoin="round"/>
<path d="M172 722 L175.500 718.500 L179 722" stroke="#c4c4c4" stroke-width="1.500" fill="none"/>
<!-- security -->
<path d="M400.500 710 L409 713 V719 C409 724.500 405.500 728 400.500 730.500 C395.500 728 392 724.500 392 719 V713 Z" fill="#c4c4c4"/><path d="M400.500 712.200 V720 H394 V714.500 Z M400.500 720 H407 C406.700 723.500 404.500 726.300 400.500 728.300 Z" fill="#1b1b1b"/>
<!-- participants -->
<circle cx="503" cy="716" r="3.800" fill="#c4c4c4"/><path d="M495 728 C495 723 498 721 503 721 C508 721 511 723 511 728 Z" fill="#c4c4c4"/><circle cx="511.500" cy="715" r="3" fill="#c4c4c4"/><path d="M511 720.300 C515 720 517.500 722 517.500 726 H512.500 C512.300 723.500 512 722 510.500 720.500 Z" fill="#c4c4c4"/>
<path d="M555 722 L558.500 718.500 L562 722" stroke="#c4c4c4" stroke-width="1.500" fill="none"/>
<!-- polls -->
<rect x="602" y="719" width="4.500" height="10" rx="1" fill="#c4c4c4"/><rect x="608" y="711" width="4.500" height="18" rx="1" fill="#c4c4c4"/><rect x="614" y="716" width="4.500" height="13" rx="1" fill="#c4c4c4"/>
<!-- chat -->
<path d="M681 712 H699 Q701 712 701 714 V723 Q701 725 699 725 H691 L686 729.500 V725 H683 Q681 725 681 723 Z" fill="#c4c4c4"/>
<circle cx="701.500" cy="712" r="7" fill="#e8353f"/>
<!-- share -->
<rect x="768" y="710" width="24" height="19" rx="3" fill="#23d959"/><path d="M780 725 V715 M776 718.500 L780 714.500 L784 718.500" stroke="#0c3a1b" stroke-width="1.800" fill="none"/>
<path d="M813 722 L816.500 718.500 L820 722" stroke="#c4c4c4" stroke-width="1.500" fill="none"/>
<!-- record -->
<circle cx="868.500" cy="720" r="9" fill="none" stroke="#c4c4c4" stroke-width="1.500"/><circle cx="868.500" cy="720" r="6.300" fill="#c4c4c4"/>
<!-- breakout -->
<rect x="950" y="710" width="9" height="9" rx="1.500" fill="#c4c4c4"/><rect x="961" y="710" width="9" height="9" rx="1.500" fill="#c4c4c4"/><rect x="950" y="721" width="9" height="9" rx="1.500" fill="#c4c4c4"/><rect x="961" y="721" width="9" height="9" rx="1.500" fill="#c4c4c4"/>
<rect x="970" y="711" width="21" height="14" rx="5" fill="#e8353f"/>
<!-- reactions -->
<circle cx="1051" cy="721" r="8" fill="#c4c4c4"/><circle cx="1048.300" cy="718.800" r="1.100" fill="#1b1b1b"/><circle cx="1053.700" cy="718.800" r="1.100" fill="#1b1b1b"/><path d="M1047 722.500 Q1051 727 1055 722.500" stroke="#1b1b1b" stroke-width="1.300" fill="none"/>
<circle cx="1059.500" cy="712.500" r="4.500" fill="#1b1b1b"/><path d="M1057 711 H1063 M1060 708 V714" stroke="#c4c4c4" stroke-width="1.200"/>
</svg>
<div class="t" style="left:522px;top:711px;font-size:11.5px;color:#c9c9c9">13</div>
<div class="t c" style="left:701.500px;top:706.500px;font-size:10.5px;font-weight:bold;color:#fff">1</div>
<div class="t c" style="left:980.500px;top:712.500px;font-size:10.5px;font-weight:bold;color:#fff">12</div>
<div class="bl" style="left:46px">Mute</div>
<div class="bl" style="left:138px;transform:translateX(-50%) scaleX(0.985)">Stop Video</div>
<div class="bl" style="left:400px;transform:translateX(-50%) scaleX(0.98)">Security</div>
<div class="bl" style="left:506px;transform:translateX(-50%) scaleX(0.972)">Participants</div>
<div class="bl" style="left:610px;transform:translateX(-50%) scaleX(0.94)">Polls</div>
<div class="bl" style="left:691px;transform:translateX(-50%) scaleX(0.905)">Chat</div>
<div class="bl" style="left:779px;color:#23d959;transform:translateX(-50%) scaleX(0.917)">Share Screen</div>
<div class="bl" style="left:868px;transform:translateX(-50%) scaleX(0.932)">Record</div>
<div class="bl" style="left:960px;transform:translateX(-50%) scaleX(0.95)">Breakout Rooms</div>
<div class="bl" style="left:1051px;transform:translateX(-50%) scaleX(0.926)">Reactions</div>
<div class="a" style="left:1293px;top:715.500px;width:61px;height:27px;background:#c3252c;border-radius:7px"></div>
<div class="t c" style="left:1323.500px;top:723.500px;font-size:11px;font-weight:bold;color:#fff">End</div>
</div>

<!-- GREEN ANNOTATIONS -->
<svg id="ann" class="a" style="left:0;top:0" width="1366" height="756" viewBox="0 0 1366 756" fill="none" stroke="#4fd32b" stroke-linejoin="round" stroke-linecap="round">
<path d="M957.400 100.700 C962 100 967 100 971.100 101.200 C975 102.500 977.500 104.500 978.900 106.400 C981.500 109.500 982.800 112.500 983.200 115.800 C983.800 120.500 983.500 125.500 982.800 130.400 C981.800 138 980.500 145.500 978.900 152.800 C977.500 158.500 975.800 164.500 973.700 170 C971.500 176 969 182 966 187.200 C964 191 961.800 194.500 959.100 197.500 C957 199.800 954.800 201.300 952.200 201.800 C945.500 202.500 938.500 202.500 931.600 201.800 C928 201 924.500 199.500 921.300 197.500 C916.300 194.500 911.500 191.300 907.500 187.200 C904.300 183.800 901.500 179.800 899.800 175.100 C898.500 171.300 897.900 167.200 898.100 163.100 C898.400 158.500 899.300 153.800 900.600 149.300 C902 144.600 903.700 140 905.800 135.600 C908 131.200 911 127.200 914.400 123.600 C918 119.800 922 116.300 926.400 113.200 C930.700 110.200 935.300 107.600 940.200 105.500 C945.700 103.200 951.500 101.500 957.400 100.700 Z" stroke-width="1.900"/>
<path d="M597.800 289.600 L603.100 289.400 C604.800 290.300 605.700 291.800 606 293.200 C606.400 297.500 606.300 302 606.200 306.500 C606.200 309.600 606.100 312.700 605.700 315.700 C605 317.800 603.600 319 601.700 319.400 C598.700 320 595.600 320.200 592.500 320 C589.200 319.600 586 318.800 583.200 317.400 C581.700 316.300 580.900 314.800 580.600 313.100 C580.300 310 580.300 306.900 580.600 303.800 C581 301.600 581.900 299.600 583.200 297.900 C584.900 295.900 587 294.300 589.200 292.900 C590.500 292.100 591.800 291.500 593.100 290.900 C594.600 290.400 596.200 290 597.800 289.900" stroke-width="2"/>
<path d="M597.500 289.500 H603" stroke-width="2.600"/>
</svg>
</body></html>
